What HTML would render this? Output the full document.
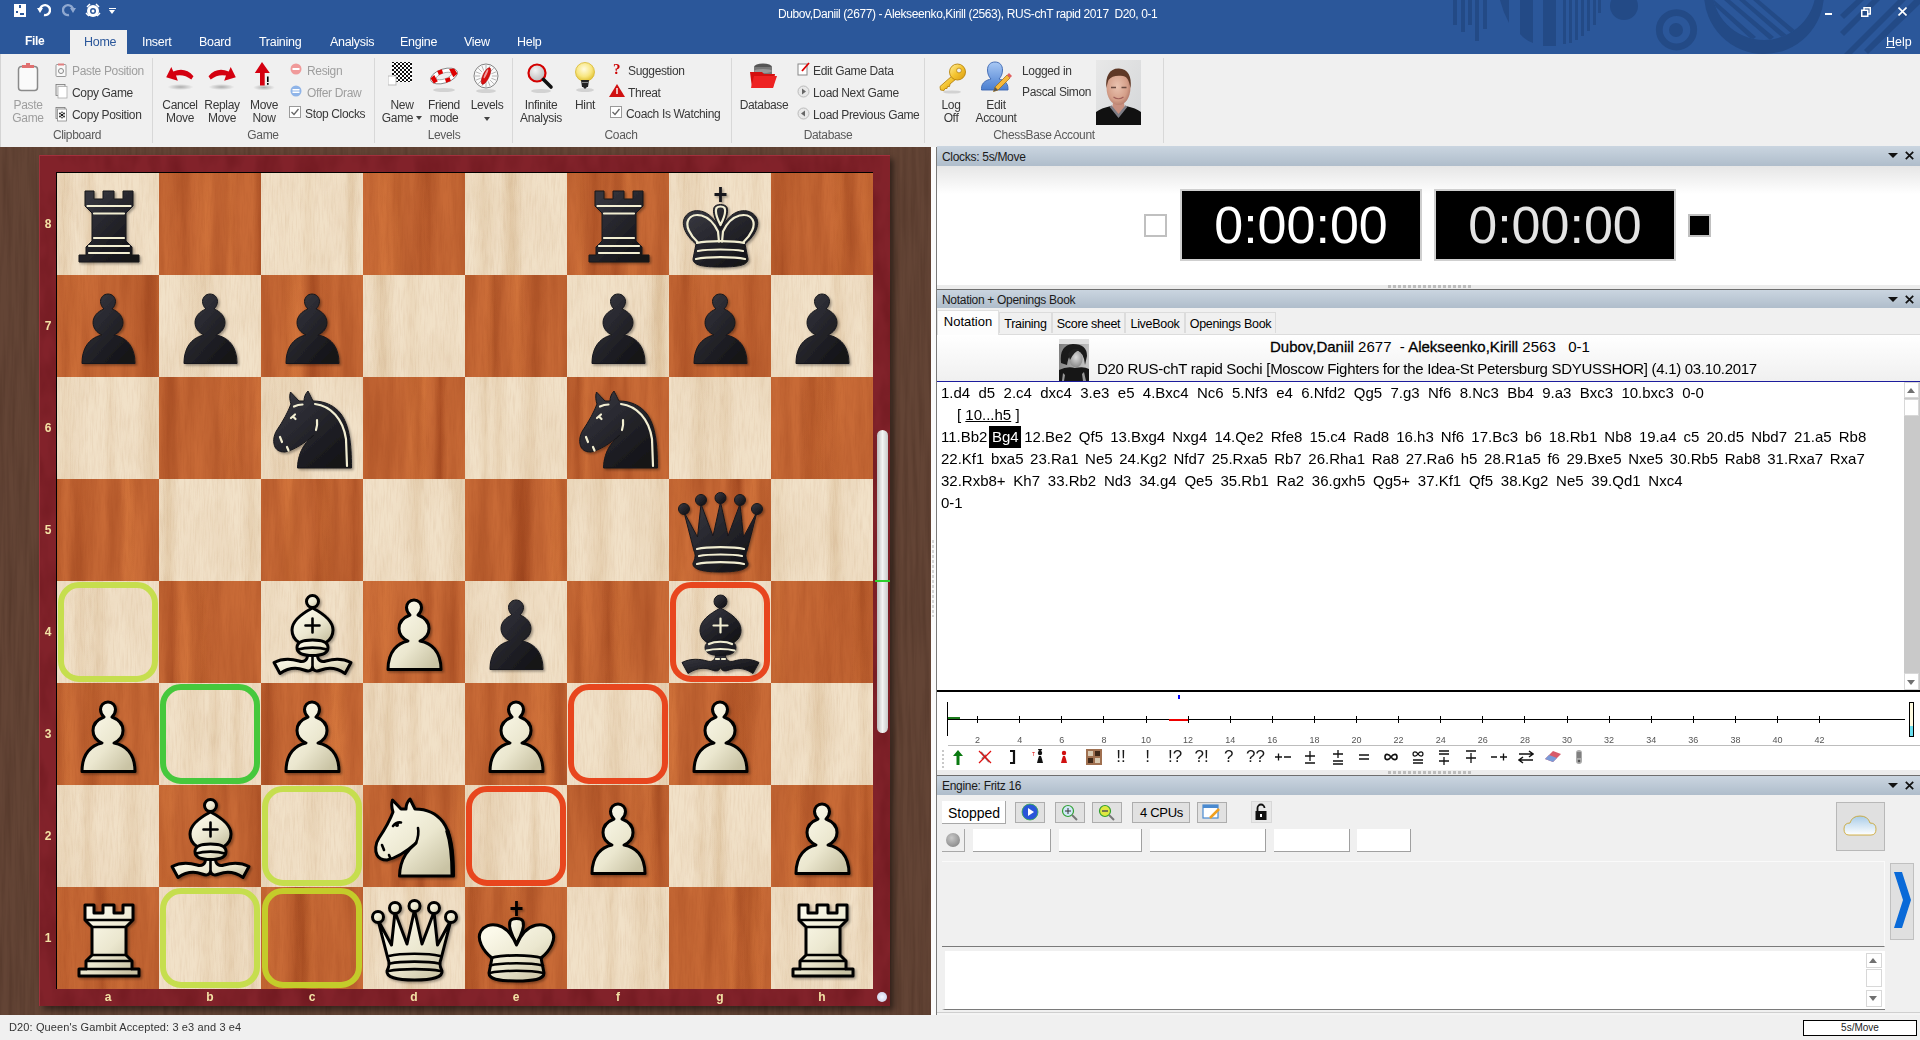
<!DOCTYPE html>
<html><head><meta charset="utf-8">
<style>
*{box-sizing:border-box}
html,body{margin:0;padding:0}
body{width:1920px;height:1040px;position:relative;overflow:hidden;background:#f0f0f0;font-family:"Liberation Sans",sans-serif;font-size:12px;color:#000}
.a{position:absolute}
#title{left:0;top:0;width:1920px;height:54px;background:#2b579a;overflow:hidden}
.tt{position:absolute;color:#fff;white-space:nowrap}
.tab{position:absolute;top:35px;color:#fff;font-size:12.5px;white-space:nowrap;letter-spacing:-0.3px}
#ribbon{left:0;top:54px;width:1920px;height:93px;background:#f0f0f0;border-left:1px solid #d4d4d4}
.rt{position:absolute;white-space:nowrap;font-size:12px;color:#383838;letter-spacing:-0.35px}
.rc{position:absolute;white-space:nowrap;font-size:12px;color:#383838;text-align:center;line-height:13px;letter-spacing:-0.35px}
.dis{color:#9e9e9e}
.grp{position:absolute;top:128px;font-size:12px;color:#5a5a5a;white-space:nowrap;text-align:center;letter-spacing:-0.35px}
.sep{position:absolute;top:58px;width:1px;height:85px;background:#d8d8d8}
#wood{left:0;top:147px;width:931px;height:868px;background-color:#634435}
#frame{left:39px;top:155px;width:851px;height:851px;background-color:#82222a;border-left:1px solid #a3303c;border-top:1px solid #a3303c;box-shadow:4px 4px 6px rgba(0,0,0,.45)}
.sq{position:absolute;width:102px;height:102px}
.l{background-color:#f1e1c8;--finel:repeating-linear-gradient(90deg,rgba(190,150,100,.04) 0 1px,transparent 1px 3px,rgba(255,255,255,.04) 3px 4px,transparent 4px 7px)}
.d{background-color:#c86a36;--fined:repeating-linear-gradient(90deg,rgba(120,40,10,.07) 0 1px,transparent 1px 4px,rgba(255,170,100,.05) 4px 5px,transparent 5px 9px)}
.hl{position:absolute;width:100px;height:100px;border:6px solid;border-radius:21px}
.pc{position:absolute;overflow:visible}
.rk{position:absolute;left:43px;width:10px;text-align:center;color:#f3e3a6;font-weight:bold;font-size:12px}
.fl{position:absolute;top:990px;width:20px;text-align:center;color:#f3e3a6;font-weight:bold;font-size:12px}
.ph{position:absolute;left:937px;width:983px;height:19px;background:linear-gradient(#cad5e0,#afbdcb);font-size:12px;color:#1a1a1a;padding:3px 0 0 5px;white-space:nowrap;letter-spacing:-0.3px}
.ph .dd{position:absolute;right:22px;top:7px;width:0;height:0;border-left:5px solid transparent;border-right:5px solid transparent;border-top:5px solid #111}
.ph .cx{position:absolute;right:6px;top:5px}
.ntab{position:absolute;top:312px;height:21px;background:#f0f0f0;border:1px solid #dcdcdc;border-bottom:none;font-size:12.5px;padding:4px 0 0 0;text-align:center;white-space:nowrap;letter-spacing:-0.3px}
.nt{position:absolute;font-size:15px;white-space:nowrap;color:#000}
.tk{position:absolute;top:716px;width:1px;height:7px;background:#000}
.tl{position:absolute;top:735px;font-size:9px;color:#555;width:20px;text-align:center}
.an{position:absolute;top:750px;font-size:16px;color:#222;white-space:nowrap;text-align:center;width:24px}
.ebtn{position:absolute;top:802px;height:21px;background:#e1e1e1;border:1px solid #adadad}
.efld{position:absolute;top:829px;height:23px;background:#fff;border-right:1px solid #a0a0a0;border-bottom:1px solid #a0a0a0}
</style></head><body>
<svg width="0" height="0" style="position:absolute"><defs>
<linearGradient id="wg" x1="0.2" y1="0.1" x2="0.9" y2="0.9"><stop offset="0" stop-color="#fbf9ea"/><stop offset="0.55" stop-color="#ebe7cf"/><stop offset="1" stop-color="#c9c3a4"/></linearGradient>
<linearGradient id="bg" x1="0.2" y1="0.1" x2="0.9" y2="0.9"><stop offset="0" stop-color="#34343c"/><stop offset="1" stop-color="#121216"/></linearGradient>
<filter id="sh" x="-10%" y="-10%" width="130%" height="130%"><feDropShadow dx="1.6" dy="1.6" stdDeviation="1" flood-color="#000" flood-opacity="0.35"/></filter>
<symbol id="wp" viewBox="0 0 102 102" overflow="visible"><g filter="url(#sh)"><path d="M51,19 C46.5,19 43.5,22.5 43.5,26.5 C43.5,29.5 45,32 47,34 C40.5,36.5 36,41.5 36,47.5 C36,53 39.5,57.5 45,60 C35,62 25,70 25,88.5 L78,88.5 C78,70 68,62 57,60 C62.5,57.5 66,53 66,47.5 C66,41.5 61.5,36.5 55,34 C57,32 58.5,29.5 58.5,26.5 C58.5,22.5 55.5,19 51,19 Z" fill="url(#wg)" stroke="#000" stroke-width="3" stroke-linejoin="round"/></g></symbol>
<symbol id="bp" viewBox="0 0 102 102" overflow="visible"><g filter="url(#sh)"><path d="M51,19 C46.5,19 43.5,22.5 43.5,26.5 C43.5,29.5 45,32 47,34 C40.5,36.5 36,41.5 36,47.5 C36,53 39.5,57.5 45,60 C35,62 25,70 25,88.5 L78,88.5 C78,70 68,62 57,60 C62.5,57.5 66,53 66,47.5 C66,41.5 61.5,36.5 55,34 C57,32 58.5,29.5 58.5,26.5 C58.5,22.5 55.5,19 51,19 Z" fill="url(#bg)" stroke="#18181c" stroke-width="1"/></g></symbol>
<symbol id="wr" viewBox="0 0 102 102" overflow="visible"><g filter="url(#sh)"><path d="M28,18 L37,18 L37,26 L46,26 L46,18 L57,18 L57,26 L66,26 L66,18 L76,18 L76,33 L69,40 L69,68 L75,74 L75,82 L82,82 L82,89 L22,89 L22,82 L29,82 L29,74 L35,68 L35,40 L28,33 Z" fill="url(#wg)" stroke="#000" stroke-width="3" stroke-linejoin="round"/><path d="M28,33 L76,33 M35,40 L69,40 M35,68 L69,68 M29,74 L75,74 M29,82 L75,82" fill="none" stroke="#000" stroke-width="2.6"/></g></symbol>
<symbol id="br" viewBox="0 0 102 102" overflow="visible"><g filter="url(#sh)"><path d="M28,18 L37,18 L37,26 L46,26 L46,18 L57,18 L57,26 L66,26 L66,18 L76,18 L76,33 L69,40 L69,68 L75,74 L75,82 L82,82 L82,89 L22,89 L22,82 L29,82 L29,74 L35,68 L35,40 L28,33 Z" fill="url(#bg)" stroke="#18181c" stroke-width="1"/><path d="M30.5,33 L73.5,33 M37,40.5 L67,40.5 M37,65 L67,65 M32,73 L72,73 M32,80 L72,80" fill="none" stroke="#f2eed2" stroke-width="2.2" stroke-linecap="round"/></g></symbol>
<symbol id="wn" viewBox="0 0 102 102" overflow="visible"><g filter="url(#sh)"><path d="M36.5,91 L90.5,91 C90.5,65 88,48 80,37 C73,28 63,24 52,24 L47,14 C44,17 43,21 43,24 L38,24 L29.5,15 C28,19 29,24 30,27 C27,35 22,44 16,53 C12,59 12,66 14,70 C16,74 20,75 24,75 C33,73 44,66 53,58 C47,63 37,72 36.5,91 Z" fill="url(#wg)" stroke="#000" stroke-width="3" stroke-linejoin="round"/><path d="M55,43 C56,48 55,53 53,58 M30,41 C32,38.5 35,37 38,37.5 M19,60 L21,65 M26,70 L27.5,73.5" fill="none" stroke="#000" stroke-width="2.6" stroke-linecap="round"/><circle cx="34" cy="40" r="2" fill="#000"/><path d="M84,45 C89,60 89.5,75 89.5,90" fill="none" stroke="#000" stroke-width="4"/></g></symbol>
<symbol id="bn" viewBox="0 0 102 102" overflow="visible"><g filter="url(#sh)"><path d="M36.5,91 L90.5,91 C90.5,65 88,48 80,37 C73,28 63,24 52,24 L47,14 C44,17 43,21 43,24 L38,24 L29.5,15 C28,19 29,24 30,27 C27,35 22,44 16,53 C12,59 12,66 14,70 C16,74 20,75 24,75 C33,73 44,66 53,58 C47,63 37,72 36.5,91 Z" fill="url(#bg)" stroke="#18181c" stroke-width="1"/><path d="M54,27 C70,29 82,42 85,62 L86,89 M56,43 C56.5,47 56,50 55,53 M33,29.5 C36,28 39,27.5 41.5,27.5 M30,41 L34,37.5 M32,39.5 L34.5,42 M19,60 L21,65 M26,70 L27.5,73.5" fill="none" stroke="#f2eed2" stroke-width="2.2" stroke-linecap="round"/></g></symbol>
<symbol id="wb" viewBox="0 0 102 102" overflow="visible"><g filter="url(#sh)"><path d="M13,81.5 C22,77 31,78 38,80 C43,81.5 46.5,79 46.5,74 L56.5,74 C56.5,79 60,81.5 65,80 C72,78 81,77 90,81.5 L84,92.5 C76,87 68,86 60,89 C55,91 52.5,89.5 51.5,86.5 C50.5,89.5 48,91 43,89 C35,86 27,87 19,92.5 Z" fill="url(#wg)" stroke="#000" stroke-width="3" stroke-linejoin="round"/><path d="M51.5,27 C40,33 31,40 31,49 C31,55 34,59 38,61.5 L65,61.5 C69,59 72,55 72,49 C72,40 63,33 51.5,27 Z" fill="url(#wg)" stroke="#000" stroke-width="3" stroke-linejoin="round"/><path d="M36,66.5 C36,60.5 44,59 51.5,59 C59,59 67,60.5 67,66.5 C67,72.5 60,74.5 51.5,74.5 C43,74.5 36,72.5 36,66.5 Z" fill="url(#wg)" stroke="#000" stroke-width="3" stroke-linejoin="round"/><circle cx="51.5" cy="20.5" r="6" fill="url(#wg)" stroke="#000" stroke-width="3" stroke-linejoin="round"/><path d="M37,68.5 C45,66 58,66 66,68.5 M44.5,44.5 L58.5,44.5 M51.5,37.5 L51.5,51.5 M51.5,75 L51.5,86" fill="none" stroke="#000" stroke-width="2.6" stroke-linecap="round"/></g></symbol>
<symbol id="bb" viewBox="0 0 102 102" overflow="visible"><g filter="url(#sh)"><path d="M13,81.5 C22,77 31,78 38,80 C43,81.5 46.5,79 46.5,74 L56.5,74 C56.5,79 60,81.5 65,80 C72,78 81,77 90,81.5 L84,92.5 C76,87 68,86 60,89 C55,91 52.5,89.5 51.5,86.5 C50.5,89.5 48,91 43,89 C35,86 27,87 19,92.5 Z" fill="url(#bg)" stroke="#18181c" stroke-width="1"/><path d="M51.5,27 C40,33 31,40 31,49 C31,55 34,59 38,61.5 L65,61.5 C69,59 72,55 72,49 C72,40 63,33 51.5,27 Z" fill="url(#bg)" stroke="#18181c" stroke-width="1"/><path d="M36,66.5 C36,60.5 44,59 51.5,59 C59,59 67,60.5 67,66.5 C67,72.5 60,74.5 51.5,74.5 C43,74.5 36,72.5 36,66.5 Z" fill="url(#bg)" stroke="#18181c" stroke-width="1"/><circle cx="51.5" cy="20.5" r="6.5" fill="url(#bg)" stroke="#18181c" stroke-width="1"/><path d="M40,63 C46,60 57,60 63,63 M37.5,69.5 C45,67.5 58,67.5 65.5,69.5 M44.5,44.5 L58.5,44.5 M51.5,37.5 L51.5,51.5 M47,78 L50,78 M53,78 L56,78" fill="none" stroke="#f2eed2" stroke-width="2.2" stroke-linecap="round"/></g></symbol>
<symbol id="wq" viewBox="0 0 102 102" overflow="visible"><g filter="url(#sh)"><path d="M15,33 L28.5,58 L32,25 L44,57 L51.5,23 L59,57 L71,25 L74.5,58 L88,33 L78,72 C76,76 77,80 79,84 C80,90 70,93 51.5,93 C33,93 23,90 24,84 C26,80 27,76 25,72 Z" fill="url(#wg)" stroke="#000" stroke-width="3" stroke-linejoin="round"/><circle cx="15" cy="30" r="5.5" fill="url(#wg)" stroke="#000" stroke-width="3" stroke-linejoin="round"/><circle cx="32" cy="21" r="5.5" fill="url(#wg)" stroke="#000" stroke-width="3" stroke-linejoin="round"/><circle cx="51.5" cy="19" r="5.5" fill="url(#wg)" stroke="#000" stroke-width="3" stroke-linejoin="round"/><circle cx="71" cy="21" r="5.5" fill="url(#wg)" stroke="#000" stroke-width="3" stroke-linejoin="round"/><circle cx="88" cy="30" r="5.5" fill="url(#wg)" stroke="#000" stroke-width="3" stroke-linejoin="round"/><path d="M26,69 C38,66 65,66 77,69 M27,76.5 C38,74 65,74 76,76.5 M25.5,84 C38,81.5 65,81.5 77.5,84" fill="none" stroke="#000" stroke-width="2.6" stroke-linecap="round"/></g></symbol>
<symbol id="bq" viewBox="0 0 102 102" overflow="visible"><g filter="url(#sh)"><path d="M15,33 L28.5,58 L32,25 L44,57 L51.5,23 L59,57 L71,25 L74.5,58 L88,33 L78,72 C76,76 77,80 79,84 C80,90 70,93 51.5,93 C33,93 23,90 24,84 C26,80 27,76 25,72 Z" fill="url(#bg)" stroke="#18181c" stroke-width="1"/><circle cx="15" cy="30" r="5.5" fill="url(#bg)" stroke="#18181c" stroke-width="1"/><circle cx="32" cy="21" r="5.5" fill="url(#bg)" stroke="#18181c" stroke-width="1"/><circle cx="51.5" cy="19" r="5.5" fill="url(#bg)" stroke="#18181c" stroke-width="1"/><circle cx="71" cy="21" r="5.5" fill="url(#bg)" stroke="#18181c" stroke-width="1"/><circle cx="88" cy="30" r="5.5" fill="url(#bg)" stroke="#18181c" stroke-width="1"/><path d="M28,70 C38,67.5 65,67.5 75,70 M30,77 C40,75 63,75 73,77 M28,85 C38,82.5 65,82.5 75,85" fill="none" stroke="#f2eed2" stroke-width="2.2" stroke-linecap="round"/></g></symbol>
<symbol id="wk" viewBox="0 0 102 102" overflow="visible"><g filter="url(#sh)"><path d="M51.5,14 L51.5,29 M45.5,21.5 L57.5,21.5" fill="none" stroke="#000" stroke-width="2.8"/><path d="M51.5,57 C45,45 43.5,39 45,34.5 C46.5,30.5 56.5,30.5 58,34.5 C59.5,39 58,45 51.5,57 Z" fill="url(#wg)" stroke="#000" stroke-width="3" stroke-linejoin="round"/><path d="M27,71 C18,64 11,52 16,44 C22,34 42,34 51.5,58 C61,34 81,34 87,44 C92,52 85,64 76,71 L79,86 C79,92 70,94 51.5,94 C33,94 24,92 24,86 Z" fill="url(#wg)" stroke="#000" stroke-width="3" stroke-linejoin="round"/><path d="M26,71 C38,67.5 65,67.5 77,71 M25,78.5 C38,75.5 65,75.5 78,78.5 M24.5,86 C38,83 65,83 78.5,86" fill="none" stroke="#000" stroke-width="2.6" stroke-linecap="round"/></g></symbol>
<symbol id="bk" viewBox="0 0 102 102" overflow="visible"><g filter="url(#sh)"><path d="M51.5,14 L51.5,29 M45.5,21.5 L57.5,21.5" fill="none" stroke="#18181c" stroke-width="2.8"/><path d="M51.5,57 C45,45 43.5,39 45,34.5 C46.5,30.5 56.5,30.5 58,34.5 C59.5,39 58,45 51.5,57 Z" fill="url(#bg)" stroke="#18181c" stroke-width="1"/><path d="M27,71 C18,64 11,52 16,44 C22,34 42,34 51.5,58 C61,34 81,34 87,44 C92,52 85,64 76,71 L79,86 C79,92 70,94 51.5,94 C33,94 24,92 24,86 Z" fill="url(#bg)" stroke="#18181c" stroke-width="1"/><path d="M51.5,52 C47,43 46,38 47.5,35 C49,33 54,33 55.5,35 C57,38 56,43 51.5,52 M28.5,69 C21,62 16,53 19.5,46.5 C24,39 40,39.5 49,58.5 L50,69 M74.5,69 C82,62 87,53 83.5,46.5 C79,39 63,39.5 54,58.5 L53,69 M28,70 C38,67.5 65,67.5 75,70 M29,78 C40,76 63,76 74,78 M27,86 C38,83.5 65,83.5 76,86" fill="none" stroke="#f2eed2" stroke-width="2.2" stroke-linecap="round"/></g></symbol>
</defs></svg>

<!-- TITLE BAR -->
<div id="title" class="a">
  <svg class="a" style="left:1440px;top:0" width="480" height="54" viewBox="0 0 480 54">
    <g fill="#234a86">
      <rect x="13" y="0" width="4" height="25"/><rect x="21" y="0" width="4" height="32"/><rect x="28" y="0" width="4" height="25"/><rect x="35" y="0" width="4" height="41"/><rect x="43" y="0" width="4" height="29"/>
      <path d="M60,0 L69,0 L69,23 Q63,12 60,0 z"/>
      <path d="M80,0 L93,0 L93,43 Q85,40 80,34 z"/>
      <rect x="103" y="0" width="13" height="46"/>
      <rect x="123" y="0" width="3" height="44"/><rect x="129" y="0" width="3" height="43"/><rect x="135" y="0" width="3" height="40"/><rect x="141" y="0" width="3" height="36"/><rect x="147" y="0" width="3" height="31"/><rect x="153" y="0" width="3" height="25"/><rect x="158" y="0" width="3" height="13"/>
      <circle cx="184" cy="6" r="14"/>
      <circle cx="236.5" cy="29.8" r="17.2" fill="none" stroke="#234a86" stroke-width="6.8"/><circle cx="236" cy="30" r="7"/>
      <path fill-rule="evenodd" d="M264,-6 A60,60 0 1 0 384,-6 A60,60 0 1 0 264,-6 Z M272,-12 A52,52 0 1 1 376,-12 A52,52 0 1 1 272,-12 Z"/>
      <clipPath id="ringclip"><circle cx="324" cy="-12" r="52"/></clipPath><g clip-path="url(#ringclip)"><path d="M268,0 L312,40 L316,37 L274,0 z"/><path d="M284,0 L330,40 L334,37 L290,0 z"/><path d="M299,0 L345,40 L349,37 L305,0 z"/><path d="M313,0 L359,40 L363,37 L319,0 z"/></g>
      <path d="M400,15 L416,0 L424,0 L404,19 z"/><path d="M400,32 L432,0 L440,0 L404,36 z"/><path d="M404,54 L458,0 L466,0 L412,54 z"/><path d="M424,50 L474,0 L480,0 L480,4 L428,54 z"/>
    </g>
  </svg>
  <!-- QAT icons -->
  <div class="a" style="left:14px;top:4px;width:12px;height:13px;background:#fff"></div>
  <div class="a" style="left:19px;top:5px;width:2px;height:3px;background:#2b579a"></div>
  <div class="a" style="left:16px;top:11px;width:2px;height:2px;background:#2b579a"></div>
  <div class="a" style="left:20px;top:13px;width:4px;height:2px;background:#2b579a"></div>
  <svg class="a" style="left:37px;top:3px" width="14" height="14" viewBox="0 0 14 14"><path d="M3,7 A5,5 0 1 1 7,12" fill="none" stroke="#fff" stroke-width="2.4"/><path d="M0,5 L6,5 L3,10 z" fill="#fff"/></svg>
  <svg class="a" style="left:62px;top:3px" width="14" height="14" viewBox="0 0 14 14"><path d="M11,7 A5,5 0 1 0 7,12" fill="none" stroke="#8fa8d0" stroke-width="2.4"/><path d="M14,5 L8,5 L11,10 z" fill="#8fa8d0"/></svg>
  <svg class="a" style="left:85px;top:3px" width="16" height="16" viewBox="0 0 16 16"><circle cx="8" cy="8" r="6" fill="#fff"/><circle cx="8" cy="8" r="3" fill="#2b579a"/><circle cx="8" cy="8" r="1.5" fill="#fff"/><path d="M2,4 L5,1 M11,1 L14,4 M1,10 L4,13 M12,13 L15,10" stroke="#fff" stroke-width="1.5"/></svg>
  <div class="a" style="left:109px;top:8px;width:7px;height:1px;background:#fff"></div>
  <div class="a" style="left:109px;top:10px;width:0;height:0;border-left:3.5px solid transparent;border-right:3.5px solid transparent;border-top:4px solid #fff"></div>
  <div class="tt" style="left:778px;top:7px;font-size:12px;letter-spacing:-0.4px">Dubov,Daniil (2677) - Alekseenko,Kirill (2563), RUS-chT rapid 2017&nbsp; D20, 0-1</div>
  <!-- window controls -->
  <div class="a" style="left:1825px;top:13px;width:7px;height:2px;background:#fff"></div>
  <svg class="a" style="left:1861px;top:7px" width="10" height="10" viewBox="0 0 10 10"><rect x="0.75" y="3.25" width="6" height="6" fill="none" stroke="#fff" stroke-width="1.5"/><path d="M3,3 L3,0.75 L9.25,0.75 L9.25,7 L7,7" fill="none" stroke="#fff" stroke-width="1.5"/></svg>
  <svg class="a" style="left:1898px;top:7px" width="9" height="9" viewBox="0 0 9 9"><path d="M0.5,0.5 L8.5,8.5 M8.5,0.5 L0.5,8.5" stroke="#fff" stroke-width="1.6"/></svg>
  <div class="tt" style="left:1886px;top:35px;font-size:12.5px"><u>H</u>elp</div>
  <!-- tabs -->
  <div class="a" style="left:70px;top:30px;width:57px;height:24px;background:#f0f0f0"></div>
  <div class="tab" style="left:25px;font-weight:bold;font-size:12px;top:34px">File</div>
  <div class="tab" style="left:84px;color:#2b579a">Home</div>
  <div class="tab" style="left:142px">Insert</div>
  <div class="tab" style="left:199px">Board</div>
  <div class="tab" style="left:259px">Training</div>
  <div class="tab" style="left:330px">Analysis</div>
  <div class="tab" style="left:400px">Engine</div>
  <div class="tab" style="left:464px">View</div>
  <div class="tab" style="left:517px">Help</div>
</div>

<!-- RIBBON -->
<div id="ribbon" class="a"></div>
<div class="sep" style="left:152px"></div>
<div class="sep" style="left:374px"></div>
<div class="sep" style="left:512px"></div>
<div class="sep" style="left:731px"></div>
<div class="sep" style="left:924px"></div>
<div class="sep" style="left:1163px"></div>
<!-- clipboard -->
<svg class="a" style="left:17px;top:63px" width="22" height="29" viewBox="0 0 22 29"><rect x="1.5" y="3.5" width="19" height="24" rx="3" fill="#fafafa" stroke="#8a8a8a" stroke-width="1.5"/><rect x="5" y="2" width="12" height="3" fill="#e07070"/><rect x="9" y="0" width="4" height="3" fill="#e07070"/></svg>
<div class="rc dis" style="left:8px;top:99px;width:40px">Paste<br>Game</div>
<svg class="a" style="left:55px;top:63px" width="12" height="14" viewBox="0 0 12 14"><rect x="1" y="1.5" width="10" height="12" rx="1" fill="#f8f8f8" stroke="#999"/><rect x="3" y="0.5" width="6" height="2" fill="#e08080"/><circle cx="6" cy="8" r="2.5" fill="none" stroke="#888"/></svg>
<div class="rt dis" style="left:72px;top:64px">Paste Position</div>
<svg class="a" style="left:55px;top:84px" width="14" height="15" viewBox="0 0 14 15"><rect x="1" y="0.5" width="9" height="11" fill="#e8e8e8" stroke="#777" stroke-width="0.8"/><rect x="3" y="2.5" width="9" height="11.5" fill="#fff" stroke="#aaa" stroke-width="0.8"/></svg>
<div class="rt" style="left:72px;top:86px">Copy Game</div>
<svg class="a" style="left:55px;top:107px" width="14" height="15" viewBox="0 0 14 15"><rect x="1" y="0.5" width="9" height="11" fill="#e8e8e8" stroke="#777" stroke-width="0.8"/><rect x="2.5" y="2" width="9" height="12" fill="#fff" stroke="#888" stroke-width="0.8"/><g fill="#111"><circle cx="7" cy="8" r="1.2"/><circle cx="5" cy="6.5" r="0.9"/><circle cx="9" cy="6.5" r="0.9"/><circle cx="5" cy="9.5" r="0.9"/><circle cx="9" cy="9.5" r="0.9"/><circle cx="7" cy="5.3" r="0.8"/><circle cx="7" cy="10.8" r="0.8"/></g></svg>
<div class="rt" style="left:72px;top:108px">Copy Position</div>
<div class="grp" style="left:52px;width:50px">Clipboard</div>
<!-- game -->
<svg class="a" style="left:165px;top:64px" width="30" height="28" viewBox="0 0 30 28"><defs><radialGradient id="shd" cx="0.5" cy="0.5" r="0.5"><stop offset="0" stop-color="#000" stop-opacity="0.28"/><stop offset="1" stop-color="#000" stop-opacity="0"/></radialGradient></defs><ellipse cx="15.5" cy="23" rx="13" ry="3" fill="url(#shd)"/><path d="M1.2,13.2 L6.3,3 L8.3,7.6 Q20,2.5 28.5,12.2 L26.3,15.6 Q19,9.8 11,11.6 L12.8,16.7 Z" fill="#d40010"/></svg>
<div class="rc" style="left:158px;top:99px;width:44px">Cancel<br>Move</div>
<svg class="a" style="left:207px;top:64px" width="30" height="28" viewBox="0 0 30 28"><ellipse cx="14.5" cy="23" rx="13" ry="3" fill="url(#shd)"/><path d="M28.8,13.2 L23.7,3 L21.7,7.6 Q10,2.5 1.5,12.2 L3.7,15.6 Q11,9.8 19,11.6 L17.2,16.7 Z" fill="#d40010"/></svg>
<div class="rc" style="left:200px;top:99px;width:44px">Replay<br>Move</div>
<svg class="a" style="left:252px;top:60px" width="24" height="32" viewBox="0 0 24 32"><ellipse cx="12" cy="27.5" rx="11" ry="3" fill="url(#shd)"/><path d="M10,2 L17.8,13 L12.7,13 L12.7,25.5 L8,25.5 L8,13 L2.8,13 Z" fill="#d40010"/><rect x="15" y="16.5" width="1.6" height="5.5" fill="#000"/><rect x="15" y="23" width="1.6" height="1.8" fill="#000"/></svg>
<div class="rc" style="left:242px;top:99px;width:44px">Move<br>Now</div>
<svg class="a" style="left:290px;top:63px" width="12" height="12" viewBox="0 0 12 12"><circle cx="6" cy="6" r="5.5" fill="#f09a9a"/><rect x="2.5" y="5" width="7" height="2" fill="#fff"/></svg>
<div class="rt dis" style="left:307px;top:64px">Resign</div>
<svg class="a" style="left:290px;top:85px" width="12" height="12" viewBox="0 0 12 12"><circle cx="6" cy="6" r="5.5" fill="#8fb4e8"/><rect x="2.5" y="4" width="7" height="1.5" fill="#fff"/><rect x="2.5" y="6.5" width="7" height="1.5" fill="#fff"/></svg>
<div class="rt dis" style="left:307px;top:86px">Offer Draw</div>
<svg class="a" style="left:289px;top:106px" width="12" height="12" viewBox="0 0 12 12"><rect x="0.5" y="0.5" width="11" height="11" fill="#fff" stroke="#9a9a9a"/><path d="M2.5,6 L5,8.5 L9.5,3" fill="none" stroke="#666" stroke-width="1.3"/></svg>
<div class="rt" style="left:305px;top:107px">Stop Clocks</div>
<div class="grp" style="left:243px;width:40px">Game</div>
<!-- levels -->
<svg class="a" style="left:388px;top:61px" width="28" height="26" viewBox="0 0 28 26"><defs><pattern id="chk" width="4" height="4" patternUnits="userSpaceOnUse"><rect width="4" height="4" fill="#fff"/><rect width="2" height="2" fill="#111"/><rect x="2" y="2" width="2" height="2" fill="#111"/></pattern></defs><rect x="4" y="1" width="20" height="20" fill="url(#chk)"/><rect x="0" y="15" width="8" height="9" fill="#fff" stroke="#bbb"/></svg>
<div class="rc" style="left:380px;top:99px;width:44px">New<br>Game&nbsp;<span style="display:inline-block;width:0;height:0;border-left:3.5px solid transparent;border-right:3.5px solid transparent;border-top:4px solid #444;vertical-align:middle;margin-bottom:2px"></span></div>
<svg class="a" style="left:427px;top:63px" width="34" height="30" viewBox="0 0 34 30"><ellipse cx="17" cy="27" rx="11" ry="2" fill="#000" opacity="0.12"/><g transform="rotate(-18 17 13)"><ellipse cx="17" cy="13" rx="14" ry="7" fill="#fff" stroke="#777" stroke-width="0.8"/><ellipse cx="17" cy="13" rx="8" ry="3" fill="#f0f0f0" stroke="#888" stroke-width="0.6"/><path d="M3.5,11 L8,9 L9.5,16 L5,17 z M24,8 L29,9 L30.5,15 L25.5,17 z" fill="#d00"/><path d="M12,6.2 L17,6 L17,10 L12.5,10.4 z M17,16 L22,16 L22,19.8 L17,20 z" fill="#d00"/></g></svg>
<div class="rc" style="left:422px;top:99px;width:44px">Friend<br>mode</div>
<svg class="a" style="left:471px;top:62px" width="30" height="32" viewBox="0 0 30 32"><ellipse cx="15" cy="29" rx="10" ry="2" fill="#000" opacity="0.12"/><circle cx="15" cy="14" r="12" fill="#fafafa" stroke="#666" stroke-width="0.8"/><g stroke="#888" stroke-width="0.6"><path d="M15,3 L15,25 M4,14 L26,14 M7.2,6.2 L22.8,21.8 M22.8,6.2 L7.2,21.8 M10.8,3.8 L19.2,24.2 M19.2,3.8 L10.8,24.2 M4.8,9.8 L25.2,18.2 M4.8,18.2 L25.2,9.8"/></g><circle cx="15" cy="14" r="6" fill="#fafafa"/><ellipse cx="15" cy="14" rx="3.2" ry="9" transform="rotate(25 15 14)" fill="#d81010" stroke="#900" stroke-width="0.5"/><ellipse cx="14" cy="12" rx="1" ry="5" transform="rotate(25 15 14)" fill="#fff" opacity="0.6"/></svg>
<div class="rc" style="left:465px;top:99px;width:44px">Levels<br><span style="display:inline-block;width:0;height:0;border-left:3.5px solid transparent;border-right:3.5px solid transparent;border-top:4px solid #444;vertical-align:middle"></span></div>
<div class="grp" style="left:424px;width:40px">Levels</div>
<!-- coach -->
<svg class="a" style="left:525px;top:62px" width="32" height="32" viewBox="0 0 32 32"><defs><radialGradient id="lens" cx="0.4" cy="0.35" r="0.7"><stop offset="0" stop-color="#f4f4f4"/><stop offset="1" stop-color="#b8b8b8"/></radialGradient></defs><ellipse cx="16" cy="29" rx="10" ry="2" fill="#000" opacity="0.12"/><circle cx="12" cy="11" r="8.5" fill="url(#lens)" stroke="#d40000" stroke-width="2.2"/><path d="M18.5,17.5 L26,25" stroke="#111" stroke-width="3.6" stroke-linecap="round"/></svg>
<div class="rc" style="left:516px;top:99px;width:50px">Infinite<br>Analysis</div>
<svg class="a" style="left:572px;top:61px" width="26" height="32" viewBox="0 0 26 32"><defs><radialGradient id="bulb" cx="0.45" cy="0.35" r="0.65"><stop offset="0" stop-color="#fffbe0"/><stop offset="0.6" stop-color="#f8e680"/><stop offset="1" stop-color="#e0c030"/></radialGradient></defs><ellipse cx="13" cy="29" rx="9" ry="2" fill="#000" opacity="0.12"/><circle cx="13" cy="11" r="9.5" fill="url(#bulb)" stroke="#d8b830" stroke-width="0.8"/><path d="M9,19 L17,19 L16,26 L10,26 z" fill="#222"/><rect x="10" y="21" width="6" height="1" fill="#888"/><path d="M11,26 L15,26 L13,28 z" fill="#222"/></svg>
<div class="rc" style="left:566px;top:99px;width:38px">Hint</div>
<div class="a" style="left:613px;top:61px;color:#c00;font-weight:bold;font-size:15px;font-family:'Liberation Serif',serif">?</div>
<div class="rt" style="left:628px;top:64px">Suggestion</div>
<svg class="a" style="left:609px;top:84px" width="16" height="14" viewBox="0 0 16 14"><path d="M8,0 L16,13 L0,13 z" fill="#d01010"/><rect x="7.3" y="4" width="1.4" height="6" fill="#fff"/></svg>
<div class="rt" style="left:628px;top:86px">Threat</div>
<svg class="a" style="left:610px;top:106px" width="12" height="12" viewBox="0 0 12 12"><rect x="0.5" y="0.5" width="11" height="11" fill="#fff" stroke="#9a9a9a"/><path d="M2.5,6 L5,8.5 L9.5,3" fill="none" stroke="#666" stroke-width="1.3"/></svg>
<div class="rt" style="left:626px;top:107px">Coach Is Watching</div>
<div class="grp" style="left:601px;width:40px">Coach</div>
<!-- database -->
<svg class="a" style="left:748px;top:62px" width="30" height="28" viewBox="0 0 30 28"><ellipse cx="15" cy="5" rx="9" ry="3.5" fill="#555"/><rect x="6" y="5" width="18" height="9" fill="#777"/><ellipse cx="15" cy="9" rx="9" ry="2" fill="#999"/><path d="M2,10 L14,10 L16,12 L27,12 L25,26 L4,26 z" fill="#d41010"/><path d="M6,14 L29,14 L25,26 L3,26 z" fill="#ee2222"/></svg>
<div class="rc" style="left:737px;top:99px;width:54px">Database</div>
<svg class="a" style="left:797px;top:62px" width="13" height="14" viewBox="0 0 13 14"><rect x="1" y="2" width="9" height="11" fill="#fff" stroke="#888"/><path d="M5,9 L12,1" stroke="#d00" stroke-width="1.8"/></svg>
<div class="rt" style="left:813px;top:64px">Edit Game Data</div>
<svg class="a" style="left:797px;top:85px" width="13" height="13" viewBox="0 0 13 13"><circle cx="6.5" cy="6.5" r="5.5" fill="#e8e8e8" stroke="#bbb"/><path d="M5,3.5 L9,6.5 L5,9.5 z" fill="#666"/></svg>
<div class="rt" style="left:813px;top:86px">Load Next Game</div>
<svg class="a" style="left:797px;top:107px" width="13" height="13" viewBox="0 0 13 13"><circle cx="6.5" cy="6.5" r="5.5" fill="#e8e8e8" stroke="#bbb"/><path d="M8,3.5 L4,6.5 L8,9.5 z" fill="#666"/></svg>
<div class="rt" style="left:813px;top:108px">Load Previous Game</div>
<div class="grp" style="left:798px;width:60px">Database</div>
<!-- account -->
<svg class="a" style="left:936px;top:62px" width="32" height="32" viewBox="0 0 32 32"><defs><linearGradient id="gold" x1="0" y1="0" x2="1" y2="1"><stop offset="0" stop-color="#fff0a0"/><stop offset="0.5" stop-color="#f4c430"/><stop offset="1" stop-color="#d89a10"/></linearGradient></defs><ellipse cx="16" cy="30" rx="9" ry="1.6" fill="#000" opacity="0.12"/><path d="M16.5,13.5 L4,24.5 L4.5,28 L8,28.5 L9,26.5 L11,26.5 L11.5,24.5 L13.5,24.5 L14,22 L20,17 z" fill="url(#gold)" stroke="#b88410" stroke-width="0.9" stroke-linejoin="round"/><circle cx="21.5" cy="10" r="8" fill="url(#gold)" stroke="#b88410" stroke-width="0.9"/><circle cx="23" cy="8.5" r="2.4" fill="#f0f0f0" stroke="#b88410" stroke-width="0.8"/></svg>
<div class="rc" style="left:931px;top:99px;width:40px">Log<br>Off</div>
<svg class="a" style="left:979px;top:60px" width="34" height="34" viewBox="0 0 34 34"><defs><linearGradient id="blu" x1="0" y1="0" x2="0" y2="1"><stop offset="0" stop-color="#a8c8f4"/><stop offset="1" stop-color="#4a7ed0"/></linearGradient></defs><path d="M16,2 C11,2 8.5,5.5 8.5,10 C8.5,14 10,17 12,19 C8,20 2.5,22 2.5,28.5 L2.5,30 L29,30 L29,28.5 C29,22 24,20 20,19 C22,17 23.5,14 23.5,10 C23.5,5.5 21,2 16,2 Z" fill="url(#blu)" stroke="#3a64b0" stroke-width="0.9"/><path d="M14.5,31.5 L16,27 L28,15 L31,18 L19,30 z" fill="#f6b83a" stroke="#9a6a10" stroke-width="0.7"/><path d="M28,15 L30,13 L33,16 L31,18 z" fill="#e06060"/><path d="M14.5,31.5 L16,27 L19,30 z" fill="#555"/></svg>
<div class="rc" style="left:970px;top:99px;width:52px">Edit<br>Account</div>
<div class="rt" style="left:1022px;top:64px">Logged in</div>
<div class="rt" style="left:1022px;top:85px">Pascal Simon</div>
<svg class="a" style="left:1096px;top:60px" width="45" height="65" viewBox="0 0 45 65"><defs><radialGradient id="face" cx="0.45" cy="0.45" r="0.6"><stop offset="0" stop-color="#eac3b0"/><stop offset="0.7" stop-color="#d49e88"/><stop offset="1" stop-color="#b07868"/></radialGradient><linearGradient id="pbg" x1="0" y1="0" x2="1" y2="1"><stop offset="0" stop-color="#e8e8e8"/><stop offset="1" stop-color="#d4d6d8"/></linearGradient></defs><rect width="45" height="65" fill="url(#pbg)"/><path d="M17,43 L28,43 L30,54 L15,54 z" fill="#c89080"/><path d="M10.5,27 C10.5,14 16,11 22.5,11 C29,11 34.5,14 34.5,27 C34.5,38 29,45 22.5,45 C16,45 10.5,38 10.5,27 Z" fill="url(#face)"/><path d="M10.5,28 C9,16 14,8 23,8.5 C32,9 36,16 34.5,28 C33,21 32,17 27,16 C21,15 15,16 12.5,20 C11.5,23 11,25 10.5,28 z" fill="#5e3826"/><path d="M15,27.5 L20,27.5 M25.5,27.5 L30.5,27.5" stroke="#6a4a40" stroke-width="1.4"/><path d="M17.5,37 Q22.5,40.5 27.5,37" stroke="#a0605a" stroke-width="1.2" fill="none"/><path d="M0,65 L0,52 Q5,48 15,46 L22.5,55 L30,46 Q40,48 45,52 L45,65 z" fill="#111"/><path d="M14.5,46 L22.5,56 L30.5,46" fill="none" stroke="#7e7e86" stroke-width="2.6"/></svg>
<div class="grp" style="left:984px;width:120px">ChessBase Account</div>

<!-- BOARD AREA -->
<div id="wood" class="a"></div>
<svg class="a" style="left:0;top:147px;mix-blend-mode:multiply" width="931" height="868"><filter id="wgr" x="0" y="0" width="100%" height="100%"><feTurbulence type="fractalNoise" baseFrequency="0.25 0.01" numOctaves="3" seed="11"/><feColorMatrix type="matrix" values="0 0 0 0 0.3  0 0 0 0 0.2  0 0 0 0 0.15  -1.5 0 0 0 1.0"/></filter><rect width="931" height="868" filter="url(#wgr)" opacity="0.35"/></svg>
<div id="frame" class="a"></div>
<svg class="a" style="left:40px;top:156px;mix-blend-mode:multiply" width="850" height="850"><filter id="fgr" x="0" y="0" width="100%" height="100%"><feTurbulence type="fractalNoise" baseFrequency="0.05 0.02" numOctaves="3" seed="5"/><feColorMatrix type="matrix" values="0 0 0 0 0.35  0 0 0 0 0.05  0 0 0 0 0.08  -1.5 0 0 0 1.0"/></filter><rect width="850" height="850" filter="url(#fgr)" opacity="0.4"/></svg>
<div class="a" style="left:56px;top:172px;width:817px;height:1px;background:#000"></div><div class="a" style="left:56px;top:172px;width:1px;height:817px;background:#000"></div>
<div class="sq l" style="left:57px;top:173px;background-image:linear-gradient(90deg,transparent 25%,rgba(200,160,110,0.18) 32%,transparent 40%),linear-gradient(90deg,transparent -4%,rgba(200,160,110,0.14) 7%,transparent 19%),linear-gradient(90deg,transparent -5%,rgba(200,160,110,0.10) 6%,transparent 17%)"></div>
<div class="sq d" style="left:159px;top:173px;background-image:linear-gradient(90deg,transparent 7%,rgba(140,50,15,0.20) 23%,transparent 38%),linear-gradient(90deg,transparent 64%,rgba(235,140,70,0.18) 70%,transparent 77%),linear-gradient(90deg,transparent 92%,rgba(140,50,15,0.27) 100%,transparent 108%),linear-gradient(90deg,transparent 35%,rgba(235,140,70,0.21) 46%,transparent 56%)"></div>
<div class="sq l" style="left:261px;top:173px;background-image:linear-gradient(90deg,transparent 37%,rgba(200,160,110,0.12) 46%,transparent 56%),linear-gradient(90deg,transparent 81%,rgba(200,160,110,0.16) 87%,transparent 93%),linear-gradient(90deg,transparent 83%,rgba(200,160,110,0.17) 90%,transparent 97%)"></div>
<div class="sq d" style="left:363px;top:173px;background-image:linear-gradient(90deg,transparent 47%,rgba(140,50,15,0.26) 57%,transparent 67%),linear-gradient(90deg,transparent 6%,rgba(235,140,70,0.26) 21%,transparent 35%),linear-gradient(90deg,transparent 58%,rgba(140,50,15,0.25) 65%,transparent 73%),linear-gradient(90deg,transparent 24%,rgba(235,140,70,0.27) 33%,transparent 41%)"></div>
<div class="sq l" style="left:465px;top:173px;background-image:linear-gradient(90deg,transparent 34%,rgba(200,160,110,0.21) 45%,transparent 57%),linear-gradient(90deg,transparent 35%,rgba(200,160,110,0.17) 47%,transparent 58%),linear-gradient(90deg,transparent 7%,rgba(200,160,110,0.18) 18%,transparent 30%)"></div>
<div class="sq d" style="left:567px;top:173px;background-image:linear-gradient(90deg,transparent 35%,rgba(140,50,15,0.27) 47%,transparent 60%),linear-gradient(90deg,transparent 8%,rgba(235,140,70,0.20) 14%,transparent 20%),linear-gradient(90deg,transparent 13%,rgba(140,50,15,0.28) 27%,transparent 42%),linear-gradient(90deg,transparent 49%,rgba(235,140,70,0.24) 60%,transparent 72%)"></div>
<div class="sq l" style="left:669px;top:173px;background-image:linear-gradient(90deg,transparent 13%,rgba(200,160,110,0.18) 26%,transparent 39%),linear-gradient(90deg,transparent 77%,rgba(200,160,110,0.13) 85%,transparent 93%),linear-gradient(90deg,transparent 6%,rgba(200,160,110,0.19) 15%,transparent 23%)"></div>
<div class="sq d" style="left:771px;top:173px;background-image:linear-gradient(90deg,transparent -2%,rgba(140,50,15,0.27) 11%,transparent 24%),linear-gradient(90deg,transparent 85%,rgba(235,140,70,0.18) 94%,transparent 103%),linear-gradient(90deg,transparent 61%,rgba(140,50,15,0.22) 73%,transparent 86%),linear-gradient(90deg,transparent 58%,rgba(235,140,70,0.25) 68%,transparent 78%)"></div>
<div class="sq d" style="left:57px;top:275px;background-image:linear-gradient(90deg,transparent 90%,rgba(140,50,15,0.28) 97%,transparent 103%),linear-gradient(90deg,transparent -0%,rgba(235,140,70,0.15) 16%,transparent 32%),linear-gradient(90deg,transparent 75%,rgba(140,50,15,0.30) 88%,transparent 101%),linear-gradient(90deg,transparent 92%,rgba(235,140,70,0.19) 100%,transparent 108%)"></div>
<div class="sq l" style="left:159px;top:275px;background-image:linear-gradient(90deg,transparent 25%,rgba(200,160,110,0.15) 36%,transparent 47%),linear-gradient(90deg,transparent 35%,rgba(200,160,110,0.18) 45%,transparent 55%),linear-gradient(90deg,transparent 14%,rgba(200,160,110,0.10) 26%,transparent 38%)"></div>
<div class="sq d" style="left:261px;top:275px;background-image:linear-gradient(90deg,transparent 38%,rgba(140,50,15,0.31) 52%,transparent 66%),linear-gradient(90deg,transparent 15%,rgba(235,140,70,0.24) 29%,transparent 43%),linear-gradient(90deg,transparent 59%,rgba(140,50,15,0.18) 66%,transparent 73%),linear-gradient(90deg,transparent 25%,rgba(235,140,70,0.18) 38%,transparent 52%)"></div>
<div class="sq l" style="left:363px;top:275px;background-image:linear-gradient(90deg,transparent 6%,rgba(200,160,110,0.14) 18%,transparent 31%),linear-gradient(90deg,transparent 9%,rgba(200,160,110,0.16) 20%,transparent 31%),linear-gradient(90deg,transparent 37%,rgba(200,160,110,0.13) 48%,transparent 59%)"></div>
<div class="sq d" style="left:465px;top:275px;background-image:linear-gradient(90deg,transparent 54%,rgba(140,50,15,0.25) 68%,transparent 82%),linear-gradient(90deg,transparent 41%,rgba(235,140,70,0.28) 51%,transparent 61%),linear-gradient(90deg,transparent 21%,rgba(140,50,15,0.22) 29%,transparent 36%),linear-gradient(90deg,transparent 17%,rgba(235,140,70,0.18) 26%,transparent 35%)"></div>
<div class="sq l" style="left:567px;top:275px;background-image:linear-gradient(90deg,transparent 78%,rgba(200,160,110,0.19) 91%,transparent 103%),linear-gradient(90deg,transparent 82%,rgba(200,160,110,0.18) 90%,transparent 99%),linear-gradient(90deg,transparent 76%,rgba(200,160,110,0.17) 90%,transparent 105%)"></div>
<div class="sq d" style="left:669px;top:275px;background-image:linear-gradient(90deg,transparent 4%,rgba(140,50,15,0.27) 16%,transparent 29%),linear-gradient(90deg,transparent 40%,rgba(235,140,70,0.25) 48%,transparent 56%),linear-gradient(90deg,transparent 70%,rgba(140,50,15,0.25) 81%,transparent 92%),linear-gradient(90deg,transparent 18%,rgba(235,140,70,0.20) 24%,transparent 30%)"></div>
<div class="sq l" style="left:771px;top:275px;background-image:linear-gradient(90deg,transparent 88%,rgba(200,160,110,0.10) 96%,transparent 103%),linear-gradient(90deg,transparent 92%,rgba(200,160,110,0.11) 100%,transparent 108%),linear-gradient(90deg,transparent 56%,rgba(200,160,110,0.21) 65%,transparent 75%)"></div>
<div class="sq l" style="left:57px;top:377px;background-image:linear-gradient(90deg,transparent 77%,rgba(200,160,110,0.21) 92%,transparent 108%),linear-gradient(90deg,transparent -4%,rgba(200,160,110,0.15) 8%,transparent 20%),linear-gradient(90deg,transparent 46%,rgba(200,160,110,0.12) 53%,transparent 60%)"></div>
<div class="sq d" style="left:159px;top:377px;background-image:linear-gradient(90deg,transparent 57%,rgba(140,50,15,0.21) 71%,transparent 86%),linear-gradient(90deg,transparent 92%,rgba(235,140,70,0.24) 100%,transparent 108%),linear-gradient(90deg,transparent -4%,rgba(140,50,15,0.20) 9%,transparent 23%),linear-gradient(90deg,transparent 57%,rgba(235,140,70,0.25) 71%,transparent 84%)"></div>
<div class="sq l" style="left:261px;top:377px;background-image:linear-gradient(90deg,transparent 22%,rgba(200,160,110,0.20) 38%,transparent 53%),linear-gradient(90deg,transparent 7%,rgba(200,160,110,0.18) 21%,transparent 36%),linear-gradient(90deg,transparent -11%,rgba(200,160,110,0.13) 4%,transparent 20%)"></div>
<div class="sq d" style="left:363px;top:377px;background-image:linear-gradient(90deg,transparent 67%,rgba(140,50,15,0.21) 75%,transparent 83%),linear-gradient(90deg,transparent 54%,rgba(235,140,70,0.25) 60%,transparent 67%),linear-gradient(90deg,transparent 70%,rgba(140,50,15,0.28) 76%,transparent 83%),linear-gradient(90deg,transparent 38%,rgba(235,140,70,0.27) 50%,transparent 63%)"></div>
<div class="sq l" style="left:465px;top:377px;background-image:linear-gradient(90deg,transparent 52%,rgba(200,160,110,0.21) 65%,transparent 78%),linear-gradient(90deg,transparent 13%,rgba(200,160,110,0.20) 20%,transparent 26%),linear-gradient(90deg,transparent 24%,rgba(200,160,110,0.20) 33%,transparent 43%)"></div>
<div class="sq d" style="left:567px;top:377px;background-image:linear-gradient(90deg,transparent 4%,rgba(140,50,15,0.26) 11%,transparent 19%),linear-gradient(90deg,transparent 10%,rgba(235,140,70,0.21) 18%,transparent 25%),linear-gradient(90deg,transparent 34%,rgba(140,50,15,0.23) 42%,transparent 50%),linear-gradient(90deg,transparent 77%,rgba(235,140,70,0.17) 84%,transparent 92%)"></div>
<div class="sq l" style="left:669px;top:377px;background-image:linear-gradient(90deg,transparent 45%,rgba(200,160,110,0.20) 55%,transparent 64%),linear-gradient(90deg,transparent 18%,rgba(200,160,110,0.14) 29%,transparent 40%),linear-gradient(90deg,transparent 26%,rgba(200,160,110,0.11) 42%,transparent 57%)"></div>
<div class="sq d" style="left:771px;top:377px;background-image:linear-gradient(90deg,transparent 45%,rgba(140,50,15,0.18) 54%,transparent 63%),linear-gradient(90deg,transparent 57%,rgba(235,140,70,0.18) 65%,transparent 73%),linear-gradient(90deg,transparent 27%,rgba(140,50,15,0.32) 40%,transparent 52%),linear-gradient(90deg,transparent 30%,rgba(235,140,70,0.28) 46%,transparent 62%)"></div>
<div class="sq d" style="left:57px;top:479px;background-image:linear-gradient(90deg,transparent -6%,rgba(140,50,15,0.23) 1%,transparent 8%),linear-gradient(90deg,transparent 61%,rgba(235,140,70,0.16) 68%,transparent 76%),linear-gradient(90deg,transparent 10%,rgba(140,50,15,0.20) 23%,transparent 37%),linear-gradient(90deg,transparent 61%,rgba(235,140,70,0.17) 74%,transparent 87%)"></div>
<div class="sq l" style="left:159px;top:479px;background-image:linear-gradient(90deg,transparent -0%,rgba(200,160,110,0.14) 8%,transparent 16%),linear-gradient(90deg,transparent 79%,rgba(200,160,110,0.19) 90%,transparent 101%),linear-gradient(90deg,transparent -1%,rgba(200,160,110,0.20) 10%,transparent 21%)"></div>
<div class="sq d" style="left:261px;top:479px;background-image:linear-gradient(90deg,transparent 45%,rgba(140,50,15,0.29) 57%,transparent 69%),linear-gradient(90deg,transparent 15%,rgba(235,140,70,0.27) 28%,transparent 40%),linear-gradient(90deg,transparent 83%,rgba(140,50,15,0.27) 91%,transparent 99%),linear-gradient(90deg,transparent 51%,rgba(235,140,70,0.28) 62%,transparent 73%)"></div>
<div class="sq l" style="left:363px;top:479px;background-image:linear-gradient(90deg,transparent 41%,rgba(200,160,110,0.20) 53%,transparent 65%),linear-gradient(90deg,transparent 75%,rgba(200,160,110,0.14) 90%,transparent 105%),linear-gradient(90deg,transparent 85%,rgba(200,160,110,0.14) 95%,transparent 105%)"></div>
<div class="sq d" style="left:465px;top:479px;background-image:linear-gradient(90deg,transparent 41%,rgba(140,50,15,0.28) 55%,transparent 68%),linear-gradient(90deg,transparent 78%,rgba(235,140,70,0.28) 87%,transparent 95%),linear-gradient(90deg,transparent 43%,rgba(140,50,15,0.29) 57%,transparent 70%),linear-gradient(90deg,transparent 84%,rgba(235,140,70,0.20) 93%,transparent 102%)"></div>
<div class="sq l" style="left:567px;top:479px;background-image:linear-gradient(90deg,transparent 17%,rgba(200,160,110,0.22) 33%,transparent 49%),linear-gradient(90deg,transparent 78%,rgba(200,160,110,0.21) 92%,transparent 106%),linear-gradient(90deg,transparent -12%,rgba(200,160,110,0.13) 0%,transparent 12%)"></div>
<div class="sq d" style="left:669px;top:479px;background-image:linear-gradient(90deg,transparent 61%,rgba(140,50,15,0.27) 68%,transparent 75%),linear-gradient(90deg,transparent 70%,rgba(235,140,70,0.22) 84%,transparent 99%),linear-gradient(90deg,transparent 53%,rgba(140,50,15,0.25) 63%,transparent 73%),linear-gradient(90deg,transparent -2%,rgba(235,140,70,0.23) 11%,transparent 24%)"></div>
<div class="sq l" style="left:771px;top:479px;background-image:linear-gradient(90deg,transparent 54%,rgba(200,160,110,0.19) 64%,transparent 74%),linear-gradient(90deg,transparent -6%,rgba(200,160,110,0.14) 7%,transparent 20%),linear-gradient(90deg,transparent 53%,rgba(200,160,110,0.14) 61%,transparent 69%)"></div>
<div class="sq l" style="left:57px;top:581px;background-image:linear-gradient(90deg,transparent 11%,rgba(200,160,110,0.12) 21%,transparent 31%),linear-gradient(90deg,transparent 28%,rgba(200,160,110,0.18) 40%,transparent 51%),linear-gradient(90deg,transparent 16%,rgba(200,160,110,0.12) 25%,transparent 35%)"></div>
<div class="sq d" style="left:159px;top:581px;background-image:linear-gradient(90deg,transparent 31%,rgba(140,50,15,0.18) 46%,transparent 61%),linear-gradient(90deg,transparent 13%,rgba(235,140,70,0.24) 28%,transparent 44%),linear-gradient(90deg,transparent 3%,rgba(140,50,15,0.30) 13%,transparent 22%),linear-gradient(90deg,transparent 38%,rgba(235,140,70,0.27) 44%,transparent 50%)"></div>
<div class="sq l" style="left:261px;top:581px;background-image:linear-gradient(90deg,transparent 30%,rgba(200,160,110,0.12) 38%,transparent 46%),linear-gradient(90deg,transparent 80%,rgba(200,160,110,0.18) 91%,transparent 103%),linear-gradient(90deg,transparent 45%,rgba(200,160,110,0.19) 55%,transparent 65%)"></div>
<div class="sq d" style="left:363px;top:581px;background-image:linear-gradient(90deg,transparent 58%,rgba(140,50,15,0.22) 64%,transparent 70%),linear-gradient(90deg,transparent 9%,rgba(235,140,70,0.24) 22%,transparent 36%),linear-gradient(90deg,transparent 82%,rgba(140,50,15,0.24) 89%,transparent 96%),linear-gradient(90deg,transparent -5%,rgba(235,140,70,0.22) 3%,transparent 11%)"></div>
<div class="sq l" style="left:465px;top:581px;background-image:linear-gradient(90deg,transparent -9%,rgba(200,160,110,0.12) 4%,transparent 17%),linear-gradient(90deg,transparent 34%,rgba(200,160,110,0.20) 46%,transparent 59%),linear-gradient(90deg,transparent 34%,rgba(200,160,110,0.10) 45%,transparent 56%)"></div>
<div class="sq d" style="left:567px;top:581px;background-image:linear-gradient(90deg,transparent 29%,rgba(140,50,15,0.30) 41%,transparent 52%),linear-gradient(90deg,transparent 9%,rgba(235,140,70,0.15) 18%,transparent 26%),linear-gradient(90deg,transparent 6%,rgba(140,50,15,0.20) 12%,transparent 18%),linear-gradient(90deg,transparent 35%,rgba(235,140,70,0.24) 51%,transparent 67%)"></div>
<div class="sq l" style="left:669px;top:581px;background-image:linear-gradient(90deg,transparent 16%,rgba(200,160,110,0.11) 27%,transparent 38%),linear-gradient(90deg,transparent 27%,rgba(200,160,110,0.10) 34%,transparent 41%),linear-gradient(90deg,transparent 21%,rgba(200,160,110,0.14) 28%,transparent 36%)"></div>
<div class="sq d" style="left:771px;top:581px;background-image:linear-gradient(90deg,transparent 79%,rgba(140,50,15,0.26) 89%,transparent 99%),linear-gradient(90deg,transparent 78%,rgba(235,140,70,0.22) 86%,transparent 94%),linear-gradient(90deg,transparent 43%,rgba(140,50,15,0.18) 58%,transparent 74%),linear-gradient(90deg,transparent -2%,rgba(235,140,70,0.26) 7%,transparent 16%)"></div>
<div class="sq d" style="left:57px;top:683px;background-image:linear-gradient(90deg,transparent 25%,rgba(140,50,15,0.24) 35%,transparent 45%),linear-gradient(90deg,transparent 23%,rgba(235,140,70,0.20) 34%,transparent 45%),linear-gradient(90deg,transparent -6%,rgba(140,50,15,0.18) 4%,transparent 14%),linear-gradient(90deg,transparent 2%,rgba(235,140,70,0.28) 10%,transparent 19%)"></div>
<div class="sq l" style="left:159px;top:683px;background-image:linear-gradient(90deg,transparent 47%,rgba(200,160,110,0.19) 55%,transparent 62%),linear-gradient(90deg,transparent 15%,rgba(200,160,110,0.12) 30%,transparent 46%),linear-gradient(90deg,transparent 69%,rgba(200,160,110,0.22) 76%,transparent 84%)"></div>
<div class="sq d" style="left:261px;top:683px;background-image:linear-gradient(90deg,transparent -3%,rgba(140,50,15,0.20) 7%,transparent 17%),linear-gradient(90deg,transparent 64%,rgba(235,140,70,0.16) 75%,transparent 86%),linear-gradient(90deg,transparent -9%,rgba(140,50,15,0.20) 4%,transparent 18%),linear-gradient(90deg,transparent 61%,rgba(235,140,70,0.22) 73%,transparent 86%)"></div>
<div class="sq l" style="left:363px;top:683px;background-image:linear-gradient(90deg,transparent 41%,rgba(200,160,110,0.18) 50%,transparent 58%),linear-gradient(90deg,transparent 14%,rgba(200,160,110,0.22) 24%,transparent 35%),linear-gradient(90deg,transparent -1%,rgba(200,160,110,0.18) 9%,transparent 18%)"></div>
<div class="sq d" style="left:465px;top:683px;background-image:linear-gradient(90deg,transparent 13%,rgba(140,50,15,0.20) 24%,transparent 35%),linear-gradient(90deg,transparent 74%,rgba(235,140,70,0.22) 82%,transparent 90%),linear-gradient(90deg,transparent 83%,rgba(140,50,15,0.32) 93%,transparent 103%),linear-gradient(90deg,transparent 62%,rgba(235,140,70,0.23) 73%,transparent 85%)"></div>
<div class="sq l" style="left:567px;top:683px;background-image:linear-gradient(90deg,transparent 91%,rgba(200,160,110,0.19) 98%,transparent 104%),linear-gradient(90deg,transparent 33%,rgba(200,160,110,0.15) 48%,transparent 64%),linear-gradient(90deg,transparent 84%,rgba(200,160,110,0.22) 92%,transparent 100%)"></div>
<div class="sq d" style="left:669px;top:683px;background-image:linear-gradient(90deg,transparent 47%,rgba(140,50,15,0.24) 62%,transparent 77%),linear-gradient(90deg,transparent 56%,rgba(235,140,70,0.22) 71%,transparent 87%),linear-gradient(90deg,transparent 60%,rgba(140,50,15,0.30) 73%,transparent 87%),linear-gradient(90deg,transparent -4%,rgba(235,140,70,0.28) 4%,transparent 11%)"></div>
<div class="sq l" style="left:771px;top:683px;background-image:linear-gradient(90deg,transparent 84%,rgba(200,160,110,0.17) 91%,transparent 99%),linear-gradient(90deg,transparent 33%,rgba(200,160,110,0.15) 48%,transparent 64%),linear-gradient(90deg,transparent 33%,rgba(200,160,110,0.15) 45%,transparent 56%)"></div>
<div class="sq l" style="left:57px;top:785px;background-image:linear-gradient(90deg,transparent -6%,rgba(200,160,110,0.12) 9%,transparent 25%),linear-gradient(90deg,transparent 60%,rgba(200,160,110,0.19) 74%,transparent 88%),linear-gradient(90deg,transparent 21%,rgba(200,160,110,0.19) 30%,transparent 40%)"></div>
<div class="sq d" style="left:159px;top:785px;background-image:linear-gradient(90deg,transparent 85%,rgba(140,50,15,0.25) 97%,transparent 108%),linear-gradient(90deg,transparent 39%,rgba(235,140,70,0.28) 52%,transparent 66%),linear-gradient(90deg,transparent 34%,rgba(140,50,15,0.23) 42%,transparent 50%),linear-gradient(90deg,transparent -6%,rgba(235,140,70,0.28) 7%,transparent 19%)"></div>
<div class="sq l" style="left:261px;top:785px;background-image:linear-gradient(90deg,transparent -8%,rgba(200,160,110,0.10) 4%,transparent 16%),linear-gradient(90deg,transparent 36%,rgba(200,160,110,0.13) 51%,transparent 67%),linear-gradient(90deg,transparent 85%,rgba(200,160,110,0.21) 97%,transparent 110%)"></div>
<div class="sq d" style="left:363px;top:785px;background-image:linear-gradient(90deg,transparent 50%,rgba(140,50,15,0.27) 58%,transparent 66%),linear-gradient(90deg,transparent 88%,rgba(235,140,70,0.21) 95%,transparent 101%),linear-gradient(90deg,transparent 26%,rgba(140,50,15,0.30) 35%,transparent 44%),linear-gradient(90deg,transparent 83%,rgba(235,140,70,0.20) 97%,transparent 111%)"></div>
<div class="sq l" style="left:465px;top:785px;background-image:linear-gradient(90deg,transparent 7%,rgba(200,160,110,0.21) 22%,transparent 38%),linear-gradient(90deg,transparent -12%,rgba(200,160,110,0.19) 2%,transparent 17%),linear-gradient(90deg,transparent 62%,rgba(200,160,110,0.20) 68%,transparent 74%)"></div>
<div class="sq d" style="left:567px;top:785px;background-image:linear-gradient(90deg,transparent 19%,rgba(140,50,15,0.22) 31%,transparent 43%),linear-gradient(90deg,transparent 70%,rgba(235,140,70,0.19) 81%,transparent 91%),linear-gradient(90deg,transparent 76%,rgba(140,50,15,0.30) 90%,transparent 104%),linear-gradient(90deg,transparent 59%,rgba(235,140,70,0.20) 67%,transparent 74%)"></div>
<div class="sq l" style="left:669px;top:785px;background-image:linear-gradient(90deg,transparent 38%,rgba(200,160,110,0.20) 49%,transparent 61%),linear-gradient(90deg,transparent 23%,rgba(200,160,110,0.18) 32%,transparent 41%),linear-gradient(90deg,transparent 39%,rgba(200,160,110,0.15) 49%,transparent 58%)"></div>
<div class="sq d" style="left:771px;top:785px;background-image:linear-gradient(90deg,transparent 85%,rgba(140,50,15,0.32) 93%,transparent 101%),linear-gradient(90deg,transparent 13%,rgba(235,140,70,0.27) 24%,transparent 34%),linear-gradient(90deg,transparent 24%,rgba(140,50,15,0.20) 36%,transparent 47%),linear-gradient(90deg,transparent 80%,rgba(235,140,70,0.17) 96%,transparent 112%)"></div>
<div class="sq d" style="left:57px;top:887px;background-image:linear-gradient(90deg,transparent 36%,rgba(140,50,15,0.31) 45%,transparent 53%),linear-gradient(90deg,transparent 42%,rgba(235,140,70,0.25) 48%,transparent 55%),linear-gradient(90deg,transparent -0%,rgba(140,50,15,0.19) 8%,transparent 16%),linear-gradient(90deg,transparent 48%,rgba(235,140,70,0.23) 63%,transparent 77%)"></div>
<div class="sq l" style="left:159px;top:887px;background-image:linear-gradient(90deg,transparent 35%,rgba(200,160,110,0.15) 48%,transparent 60%),linear-gradient(90deg,transparent 86%,rgba(200,160,110,0.22) 92%,transparent 98%),linear-gradient(90deg,transparent 56%,rgba(200,160,110,0.20) 70%,transparent 84%)"></div>
<div class="sq d" style="left:261px;top:887px;background-image:linear-gradient(90deg,transparent 33%,rgba(140,50,15,0.30) 41%,transparent 50%),linear-gradient(90deg,transparent 33%,rgba(235,140,70,0.22) 44%,transparent 56%),linear-gradient(90deg,transparent 21%,rgba(140,50,15,0.31) 34%,transparent 46%),linear-gradient(90deg,transparent -4%,rgba(235,140,70,0.18) 7%,transparent 19%)"></div>
<div class="sq l" style="left:363px;top:887px;background-image:linear-gradient(90deg,transparent -3%,rgba(200,160,110,0.13) 7%,transparent 17%),linear-gradient(90deg,transparent 36%,rgba(200,160,110,0.20) 45%,transparent 53%),linear-gradient(90deg,transparent 43%,rgba(200,160,110,0.21) 56%,transparent 69%)"></div>
<div class="sq d" style="left:465px;top:887px;background-image:linear-gradient(90deg,transparent -6%,rgba(140,50,15,0.32) 7%,transparent 21%),linear-gradient(90deg,transparent 26%,rgba(235,140,70,0.21) 42%,transparent 57%),linear-gradient(90deg,transparent 47%,rgba(140,50,15,0.21) 62%,transparent 77%),linear-gradient(90deg,transparent -4%,rgba(235,140,70,0.15) 4%,transparent 12%)"></div>
<div class="sq l" style="left:567px;top:887px;background-image:linear-gradient(90deg,transparent 59%,rgba(200,160,110,0.19) 74%,transparent 90%),linear-gradient(90deg,transparent 84%,rgba(200,160,110,0.17) 91%,transparent 98%),linear-gradient(90deg,transparent 35%,rgba(200,160,110,0.20) 43%,transparent 52%)"></div>
<div class="sq d" style="left:669px;top:887px;background-image:linear-gradient(90deg,transparent 61%,rgba(140,50,15,0.20) 68%,transparent 75%),linear-gradient(90deg,transparent 51%,rgba(235,140,70,0.27) 61%,transparent 70%),linear-gradient(90deg,transparent 64%,rgba(140,50,15,0.24) 79%,transparent 93%),linear-gradient(90deg,transparent 71%,rgba(235,140,70,0.26) 83%,transparent 95%)"></div>
<div class="sq l" style="left:771px;top:887px;background-image:linear-gradient(90deg,transparent 82%,rgba(200,160,110,0.16) 91%,transparent 100%),linear-gradient(90deg,transparent -2%,rgba(200,160,110,0.12) 14%,transparent 30%),linear-gradient(90deg,transparent 55%,rgba(200,160,110,0.19) 67%,transparent 79%)"></div>
<svg class="a" style="left:57px;top:173px;mix-blend-mode:multiply" width="816" height="816"><defs><pattern id="dpat" width="204" height="204" patternUnits="userSpaceOnUse"><rect x="102" y="0" width="102" height="102" fill="#fff"/><rect x="0" y="102" width="102" height="102" fill="#fff"/></pattern><pattern id="lpat" width="204" height="204" patternUnits="userSpaceOnUse"><rect x="0" y="0" width="102" height="102" fill="#fff"/><rect x="102" y="102" width="102" height="102" fill="#fff"/></pattern><mask id="dmask"><rect width="816" height="816" fill="url(#dpat)"/></mask><mask id="lmask"><rect width="816" height="816" fill="url(#lpat)"/></mask><filter id="grain" x="0" y="0" width="100%" height="100%"><feTurbulence type="fractalNoise" baseFrequency="0.06 0.006" numOctaves="3" seed="7"/><feColorMatrix type="matrix" values="0 0 0 0 0.5  0 0 0 0 0.28  0 0 0 0 0.15  -1.6 0 0 0 1.05"/></filter><filter id="blot" x="0" y="0" width="100%" height="100%"><feTurbulence type="fractalNoise" baseFrequency="0.035 0.012" numOctaves="3" seed="3"/><feColorMatrix type="matrix" values="0 0 0 0 0.75  0 0 0 0 0.6  0 0 0 0 0.45  -1.4 0 0 0 0.85"/></filter></defs><rect width="816" height="816" filter="url(#grain)" mask="url(#dmask)" opacity="0.5"/><rect width="816" height="816" filter="url(#blot)" mask="url(#lmask)" opacity="0.3"/><filter id="fine" x="0" y="0" width="100%" height="100%"><feTurbulence type="fractalNoise" baseFrequency="0.6 0.05" numOctaves="2" seed="9"/><feColorMatrix type="matrix" values="0 0 0 0 0.6  0 0 0 0 0.4  0 0 0 0 0.25  -1.3 0 0 0 0.75"/></filter><rect width="816" height="816" filter="url(#fine)" opacity="0.25"/></svg>
<div class="hl" style="left:58px;top:582px;border-color:#c6de4e"></div>
<div class="hl" style="left:160px;top:684px;border-color:#46c83c"></div>
<div class="hl" style="left:262px;top:786px;border-color:#c6de4e"></div>
<div class="hl" style="left:160px;top:888px;border-color:#c6de4e"></div>
<div class="hl" style="left:262px;top:888px;border-color:#c4cc2a"></div>
<div class="hl" style="left:670px;top:582px;border-color:#e8461e"></div>
<div class="hl" style="left:568px;top:684px;border-color:#e8461e"></div>
<div class="hl" style="left:466px;top:786px;border-color:#e8461e"></div>
<svg class="pc" style="left:57px;top:173px" width="102" height="102" viewBox="0 0 102 102"><use href="#br"/></svg>
<svg class="pc" style="left:567px;top:173px" width="102" height="102" viewBox="0 0 102 102"><use href="#br"/></svg>
<svg class="pc" style="left:669px;top:173px" width="102" height="102" viewBox="0 0 102 102"><use href="#bk"/></svg>
<svg class="pc" style="left:57px;top:275px" width="102" height="102" viewBox="0 0 102 102"><use href="#bp"/></svg>
<svg class="pc" style="left:159px;top:275px" width="102" height="102" viewBox="0 0 102 102"><use href="#bp"/></svg>
<svg class="pc" style="left:261px;top:275px" width="102" height="102" viewBox="0 0 102 102"><use href="#bp"/></svg>
<svg class="pc" style="left:567px;top:275px" width="102" height="102" viewBox="0 0 102 102"><use href="#bp"/></svg>
<svg class="pc" style="left:669px;top:275px" width="102" height="102" viewBox="0 0 102 102"><use href="#bp"/></svg>
<svg class="pc" style="left:771px;top:275px" width="102" height="102" viewBox="0 0 102 102"><use href="#bp"/></svg>
<svg class="pc" style="left:261px;top:377px" width="102" height="102" viewBox="0 0 102 102"><use href="#bn"/></svg>
<svg class="pc" style="left:567px;top:377px" width="102" height="102" viewBox="0 0 102 102"><use href="#bn"/></svg>
<svg class="pc" style="left:669px;top:479px" width="102" height="102" viewBox="0 0 102 102"><use href="#bq"/></svg>
<svg class="pc" style="left:261px;top:581px" width="102" height="102" viewBox="0 0 102 102"><use href="#wb"/></svg>
<svg class="pc" style="left:363px;top:581px" width="102" height="102" viewBox="0 0 102 102"><use href="#wp"/></svg>
<svg class="pc" style="left:465px;top:581px" width="102" height="102" viewBox="0 0 102 102"><use href="#bp"/></svg>
<svg class="pc" style="left:669px;top:581px" width="102" height="102" viewBox="0 0 102 102"><use href="#bb"/></svg>
<svg class="pc" style="left:57px;top:683px" width="102" height="102" viewBox="0 0 102 102"><use href="#wp"/></svg>
<svg class="pc" style="left:261px;top:683px" width="102" height="102" viewBox="0 0 102 102"><use href="#wp"/></svg>
<svg class="pc" style="left:465px;top:683px" width="102" height="102" viewBox="0 0 102 102"><use href="#wp"/></svg>
<svg class="pc" style="left:669px;top:683px" width="102" height="102" viewBox="0 0 102 102"><use href="#wp"/></svg>
<svg class="pc" style="left:159px;top:785px" width="102" height="102" viewBox="0 0 102 102"><use href="#wb"/></svg>
<svg class="pc" style="left:363px;top:785px" width="102" height="102" viewBox="0 0 102 102"><use href="#wn"/></svg>
<svg class="pc" style="left:567px;top:785px" width="102" height="102" viewBox="0 0 102 102"><use href="#wp"/></svg>
<svg class="pc" style="left:771px;top:785px" width="102" height="102" viewBox="0 0 102 102"><use href="#wp"/></svg>
<svg class="pc" style="left:57px;top:887px" width="102" height="102" viewBox="0 0 102 102"><use href="#wr"/></svg>
<svg class="pc" style="left:363px;top:887px" width="102" height="102" viewBox="0 0 102 102"><use href="#wq"/></svg>
<svg class="pc" style="left:465px;top:887px" width="102" height="102" viewBox="0 0 102 102"><use href="#wk"/></svg>
<svg class="pc" style="left:771px;top:887px" width="102" height="102" viewBox="0 0 102 102"><use href="#wr"/></svg>
<div class="rk" style="top:217px">8</div>
<div class="fl" style="left:98px">a</div>
<div class="rk" style="top:319px">7</div>
<div class="fl" style="left:200px">b</div>
<div class="rk" style="top:421px">6</div>
<div class="fl" style="left:302px">c</div>
<div class="rk" style="top:523px">5</div>
<div class="fl" style="left:404px">d</div>
<div class="rk" style="top:625px">4</div>
<div class="fl" style="left:506px">e</div>
<div class="rk" style="top:727px">3</div>
<div class="fl" style="left:608px">f</div>
<div class="rk" style="top:829px">2</div>
<div class="fl" style="left:710px">g</div>
<div class="rk" style="top:931px">1</div>
<div class="fl" style="left:812px">h</div>
<div class="a" style="left:877px;top:430px;width:11px;height:303px;border-radius:6px;background:linear-gradient(90deg,#bdbdbd,#f4f4f4 50%,#c8c8c8)"></div>
<div class="a" style="left:875px;top:580px;width:15px;height:2px;background:#2ed02e"></div>
<div class="a" style="left:877px;top:992px;width:10px;height:10px;border-radius:50%;background:radial-gradient(#f4f6ff,#c4c8e4)"></div>

<!-- RIGHT PANELS -->
<div class="a" style="left:931px;top:147px;width:5px;height:868px;background:#fbfbfb"></div>
<div class="a" style="left:936px;top:147px;width:1px;height:868px;background:#7a7a7a"></div>
<!-- clocks -->
<div class="ph" style="top:146px;height:20px;padding-top:4px">Clocks: 5s/Move<div class="dd"></div><svg class="cx" width="9" height="9" viewBox="0 0 9 9"><path d="M0.8,0.8 L8.2,8.2 M8.2,0.8 L0.8,8.2" stroke="#111" stroke-width="1.7"/></svg></div>
<div class="a" style="left:937px;top:166px;width:983px;height:119px;background:linear-gradient(#e6e6e6,#fff 28px)"></div>
<div class="a" style="left:1144px;top:214px;width:23px;height:23px;border:2px solid #c0c0c0;background:#fff"></div>
<div class="a" style="left:1180px;top:189px;width:242px;height:72px;background:#000;border:2px solid #cfcfcf;color:#fff;font-size:52px;text-align:center;line-height:68px">0:00:00</div>
<div class="a" style="left:1434px;top:189px;width:242px;height:72px;background:#000;border:2px solid #cfcfcf;color:#e4e4e4;font-size:52px;text-align:center;line-height:68px">0:00:00</div>
<div class="a" style="left:1688px;top:214px;width:23px;height:23px;border:2px solid #c0c0c0;background:#000"></div>
<div class="a" style="left:937px;top:285px;width:983px;height:4px;background:#ececec"></div>
<div class="a" style="left:937px;top:289px;width:983px;height:1px;background:#6e6e6e"></div>
<!-- notation -->
<div class="ph" style="top:290px;height:18px">Notation + Openings Book<div class="dd"></div><svg class="cx" width="9" height="9" viewBox="0 0 9 9"><path d="M0.8,0.8 L8.2,8.2 M8.2,0.8 L0.8,8.2" stroke="#111" stroke-width="1.7"/></svg></div>
<div class="a" style="left:937px;top:308px;width:983px;height:27px;background:#f0f0f0;border-bottom:1px solid #dcdcdc"></div>
<div class="ntab" style="left:999px;width:53px">Training</div>
<div class="ntab" style="left:1052px;width:73px">Score sheet</div>
<div class="ntab" style="left:1125px;width:60px">LiveBook</div>
<div class="ntab" style="left:1185px;width:91px">Openings Book</div>
<div class="a" style="left:937px;top:310px;width:62px;height:26px;background:#fdfdfd;border:1px solid #e0e0e0;border-bottom:none;font-size:13px;text-align:center;padding-top:3px">Notation</div>
<div class="a" style="left:937px;top:335px;width:983px;height:46px;background:linear-gradient(#fff,#f0f0f0)"></div>
<svg class="a" style="left:1059px;top:339px" width="30" height="42" viewBox="0 0 30 42"><defs><linearGradient id="phb" x1="0" y1="0" x2="1" y2="0.3"><stop offset="0" stop-color="#7a7a7a"/><stop offset="1" stop-color="#c4c4c4"/></linearGradient><radialGradient id="fc" cx="0.5" cy="0.4" r="0.6"><stop offset="0" stop-color="#dcdcdc"/><stop offset="1" stop-color="#8a8a8a"/></radialGradient></defs><rect width="30" height="42" fill="url(#phb)"/><rect x="0" y="0" width="30" height="5" fill="#e0e0e0"/><path d="M2,24 Q0,6 14,5 Q28,5 28,17 L26,26 Q25,13 18,12 Q10,12 8,26 z" fill="#1a1a1a"/><ellipse cx="17" cy="20" rx="6.5" ry="8.5" fill="url(#fc)"/><path d="M9,15 Q13,8 21,10.5 Q15,12.5 11,21 z" fill="#202020"/><path d="M0,42 L0,31 Q8,27 16,29 Q25,27 30,30 L30,42 z" fill="#161616"/><path d="M4,34 L6,36 L5,42 L3,42 z M23,35 L25,33 L27,42 L24,42 z" fill="#b8b8b8" opacity="0.8"/></svg>
<div class="nt" style="left:1270px;top:338px;font-size:15px"><b style="font-weight:normal;-webkit-text-stroke:0.3px #000">Dubov,Daniil</b> 2677&nbsp; - <b style="font-weight:normal;-webkit-text-stroke:0.3px #000">Alekseenko,Kirill</b> 2563 &nbsp; 0-1</div>
<div class="nt" style="left:1097px;top:360px;font-size:15px;letter-spacing:-0.3px">D20 RUS-chT rapid Sochi [Moscow Fighters for the Idea-St Petersburg SDYUSSHOR] (4.1) 03.10.2017</div>
<div class="a" style="left:937px;top:381px;width:983px;height:1px;background:#1c1c9c"></div>
<div class="a" style="left:937px;top:382px;width:967px;height:308px;background:#fff"></div>
<div class="a" style="left:1904px;top:382px;width:16px;height:308px;background:#c9c9c9"></div>
<div class="a" style="left:1904px;top:382px;width:15px;height:16px;background:#fff;border:1px solid #d8d8d8"></div>
<div class="a" style="left:1907px;top:388px;width:0;height:0;border-left:4.5px solid transparent;border-right:4.5px solid transparent;border-bottom:5px solid #707070"></div>
<div class="a" style="left:1904px;top:399px;width:15px;height:17px;background:#fff;border:1px solid #d8d8d8"></div>
<div class="a" style="left:1904px;top:673px;width:15px;height:17px;background:#fff;border:1px solid #d8d8d8"></div>
<div class="a" style="left:1907px;top:680px;width:0;height:0;border-left:4.5px solid transparent;border-right:4.5px solid transparent;border-top:5px solid #707070"></div>
<div class="nt" style="left:941px;top:384px">1.d4&nbsp; d5&nbsp; 2.c4&nbsp; dxc4&nbsp; 3.e3&nbsp; e5&nbsp; 4.Bxc4&nbsp; Nc6&nbsp; 5.Nf3&nbsp; e4&nbsp; 6.Nfd2&nbsp; Qg5&nbsp; 7.g3&nbsp; Nf6&nbsp; 8.Nc3&nbsp; Bb4&nbsp; 9.a3&nbsp; Bxc3&nbsp; 10.bxc3&nbsp; 0-0</div>
<div class="nt" style="left:957px;top:406px">[ <span style="text-decoration:underline">10...h5</span> ]</div>
<div class="nt" style="left:941px;top:428px;word-spacing:-0.62px">11.Bb2 <span style="background:#000;color:#fff;padding:2px 2px 3px 3px;margin-left:-2px">Bg4</span> 12.Be2&nbsp; Qf5&nbsp; 13.Bxg4&nbsp; Nxg4&nbsp; 14.Qe2&nbsp; Rfe8&nbsp; 15.c4&nbsp; Rad8&nbsp; 16.h3&nbsp; Nf6&nbsp; 17.Bc3&nbsp; b6&nbsp; 18.Rb1&nbsp; Nb8&nbsp; 19.a4&nbsp; c5&nbsp; 20.d5&nbsp; Nbd7&nbsp; 21.a5&nbsp; Rb8</div>
<div class="nt" style="left:941px;top:450px;word-spacing:-0.86px">22.Kf1&nbsp; bxa5&nbsp; 23.Ra1&nbsp; Ne5&nbsp; 24.Kg2&nbsp; Nfd7&nbsp; 25.Rxa5&nbsp; Rb7&nbsp; 26.Rha1&nbsp; Ra8&nbsp; 27.Ra6&nbsp; h5&nbsp; 28.R1a5&nbsp; f6&nbsp; 29.Bxe5&nbsp; Nxe5&nbsp; 30.Rb5&nbsp; Rab8&nbsp; 31.Rxa7&nbsp; Rxa7</div>
<div class="nt" style="left:941px;top:472px;word-spacing:-0.3px">32.Rxb8+&nbsp; Kh7&nbsp; 33.Rb2&nbsp; Nd3&nbsp; 34.g4&nbsp; Qe5&nbsp; 35.Rb1&nbsp; Ra2&nbsp; 36.gxh5&nbsp; Qg5+&nbsp; 37.Kf1&nbsp; Qf5&nbsp; 38.Kg2&nbsp; Ne5&nbsp; 39.Qd1&nbsp; Nxc4</div>
<div class="nt" style="left:941px;top:494px">0-1</div>
<div class="a" style="left:937px;top:690px;width:983px;height:2px;background:#000"></div>
<!-- timeline -->
<div class="a" style="left:937px;top:692px;width:983px;height:54px;background:#fff"></div>
<div class="a" style="left:947px;top:702px;width:1px;height:34px;background:#000"></div>
<div class="a" style="left:947px;top:719px;width:958px;height:1px;background:#000"></div>
<div class="a" style="left:948px;top:717px;width:12px;height:2px;background:#1a7a1a"></div>
<div class="a" style="left:1169px;top:719px;width:20px;height:2px;background:#e00"></div>
<div class="a" style="left:1178px;top:695px;width:2px;height:4px;background:#00f"></div>
<div class="a" style="left:1909px;top:702px;width:5px;height:35px;border:1px solid #000;background:linear-gradient(#fffbe0 70%,#6ae0f0 70%)"></div>
<div class="tk" style="left:977.1px"></div><div class="tl" style="left:967.6px">2</div>
<div class="tk" style="left:1019.2px"></div><div class="tl" style="left:1009.7px">4</div>
<div class="tk" style="left:1061.3px"></div><div class="tl" style="left:1051.8px">6</div>
<div class="tk" style="left:1103.4px"></div><div class="tl" style="left:1093.9px">8</div>
<div class="tk" style="left:1145.5px"></div><div class="tl" style="left:1136.0px">10</div>
<div class="tk" style="left:1187.6px"></div><div class="tl" style="left:1178.1px">12</div>
<div class="tk" style="left:1229.7px"></div><div class="tl" style="left:1220.2px">14</div>
<div class="tk" style="left:1271.8px"></div><div class="tl" style="left:1262.3px">16</div>
<div class="tk" style="left:1313.9px"></div><div class="tl" style="left:1304.4px">18</div>
<div class="tk" style="left:1356.0px"></div><div class="tl" style="left:1346.5px">20</div>
<div class="tk" style="left:1398.1px"></div><div class="tl" style="left:1388.6px">22</div>
<div class="tk" style="left:1440.2px"></div><div class="tl" style="left:1430.7px">24</div>
<div class="tk" style="left:1482.3px"></div><div class="tl" style="left:1472.8px">26</div>
<div class="tk" style="left:1524.4px"></div><div class="tl" style="left:1514.9px">28</div>
<div class="tk" style="left:1566.5px"></div><div class="tl" style="left:1557.0px">30</div>
<div class="tk" style="left:1608.6px"></div><div class="tl" style="left:1599.1px">32</div>
<div class="tk" style="left:1650.7px"></div><div class="tl" style="left:1641.2px">34</div>
<div class="tk" style="left:1692.8px"></div><div class="tl" style="left:1683.3px">36</div>
<div class="tk" style="left:1734.9px"></div><div class="tl" style="left:1725.4px">38</div>
<div class="tk" style="left:1777.0px"></div><div class="tl" style="left:1767.5px">40</div>
<div class="tk" style="left:1819.1px"></div><div class="tl" style="left:1809.6px">42</div>
<div class="a" style="left:948px;top:745px;width:972px;height:1px;background:#bdbdbd"></div>
<div class="a" style="left:937px;top:746px;width:983px;height:24px;background:#fff"></div>
<svg class="a" style="left:952.0px;top:749px" width="12" height="18" viewBox="0 0 12 18"><path d="M6,1 L11,7 L7.5,7 L7.5,16 L4.5,16 L4.5,7 L1,7 z" fill="#0a7a10"/></svg>
<svg class="a" style="left:977.0px;top:749px" width="16" height="16" viewBox="0 0 16 16"><path d="M4,3 L12,13 M5,10 L9,6" stroke="#888" stroke-width="2"/><path d="M2,2 L14,14 M14,2 L2,14" stroke="#e01010" stroke-width="1.3"/></svg>
<svg class="a" style="left:1009.0px;top:749px" width="8" height="16" viewBox="0 0 8 16"><path d="M1,2 L5,2 L5,14 L1,14" fill="none" stroke="#111" stroke-width="2.2"/></svg>
<svg class="a" style="left:1031.0px;top:749px" width="16" height="16" viewBox="0 0 16 16"><path d="M9,2 a2,2 0 1 1 0.1,0 M6,14 L12,14 L11,10 L10,7 L8,7 L7,10 z" fill="#111"/><circle cx="9" cy="4" r="2.2" fill="#111"/><text x="1" y="7" font-size="5" fill="#d00">T</text></svg>
<svg class="a" style="left:1057.0px;top:749px" width="16" height="16" viewBox="0 0 16 16"><circle cx="7" cy="4" r="2.2" fill="#d01010"/><path d="M4,14 L10,14 L9,10 L8,7 L6,7 L5,10 z" fill="#d01010"/></svg>
<svg class="a" style="left:1085.5px;top:749px" width="16" height="16" viewBox="0 0 16 16"><rect x="0" y="0" width="16" height="16" fill="#a07050"/><rect x="2" y="2" width="5" height="5" fill="#d8c8b0"/><rect x="9" y="9" width="5" height="5" fill="#d8c8b0"/><rect x="9" y="2" width="5" height="5" fill="#402818"/><rect x="2" y="9" width="5" height="5" fill="#402818"/></svg>
<div class="a" style="left:1106.0px;top:747px;width:30px;text-align:center;font-size:17px;color:#1a1a1a;font-family:"Liberation Sans",sans-serif;">!!</div>
<div class="a" style="left:1132.5px;top:747px;width:30px;text-align:center;font-size:17px;color:#1a1a1a;font-family:"Liberation Sans",sans-serif;">!</div>
<div class="a" style="left:1160.0px;top:747px;width:30px;text-align:center;font-size:17px;color:#1a1a1a;font-family:"Liberation Sans",sans-serif;">!?</div>
<div class="a" style="left:1186.6px;top:747px;width:30px;text-align:center;font-size:17px;color:#1a1a1a;font-family:"Liberation Sans",sans-serif;">?!</div>
<div class="a" style="left:1213.7px;top:747px;width:30px;text-align:center;font-size:17px;color:#1a1a1a;font-family:"Liberation Sans",sans-serif;">?</div>
<div class="a" style="left:1240.5px;top:747px;width:30px;text-align:center;font-size:17px;color:#1a1a1a;font-family:"Liberation Sans",sans-serif;">??</div>
<svg class="a" style="left:1274.0px;top:749px" width="18" height="16" viewBox="0 0 18 16"><path d="M1,8 L8,8 M4.5,4.5 L4.5,11.5 M10,8 L17,8" stroke="#111" stroke-width="1.3"/></svg>
<svg class="a" style="left:1303.0px;top:749px" width="14" height="16" viewBox="0 0 14 16"><path d="M2,7 L12,7 M7,2 L7,12 M2,14 L12,14" stroke="#111" stroke-width="1.3"/></svg>
<svg class="a" style="left:1330.5px;top:749px" width="14" height="18" viewBox="0 0 14 18"><path d="M2,5 L12,5 M7,1 L7,9 M2,12 L12,12 M2,15 L12,15" stroke="#111" stroke-width="1.3"/></svg>
<svg class="a" style="left:1357.0px;top:749px" width="14" height="16" viewBox="0 0 14 16"><path d="M2,6 L12,6 M2,10 L12,10" stroke="#111" stroke-width="1.3"/></svg>
<svg class="a" style="left:1384.0px;top:749px" width="14" height="16" viewBox="0 0 14 16"><path d="M7,8 C4,4 1,5 1,8 C1,11 4,12 7,8 C10,4 13,5 13,8 C13,11 10,12 7,8 z" fill="none" stroke="#111" stroke-width="1.6"/></svg>
<svg class="a" style="left:1410.7px;top:749px" width="14" height="18" viewBox="0 0 14 18"><path d="M7,5 C5,2 2,2.5 2,5 C2,7.5 5,8 7,5 C9,2 12,2.5 12,5 C12,7.5 9,8 7,5 z" fill="none" stroke="#111" stroke-width="1.3"/><path d="M2,11 L12,11 M2,14 L12,14" stroke="#111" stroke-width="1.3"/></svg>
<svg class="a" style="left:1437.0px;top:749px" width="14" height="18" viewBox="0 0 14 18"><path d="M2,2 L12,2 M2,5 L12,5 M2,12 L12,12 M7,8 L7,16" stroke="#111" stroke-width="1.3"/></svg>
<svg class="a" style="left:1464.0px;top:749px" width="14" height="16" viewBox="0 0 14 16"><path d="M2,2 L12,2 M2,9 L12,9 M7,4 L7,14" stroke="#111" stroke-width="1.3"/></svg>
<svg class="a" style="left:1489.6px;top:749px" width="18" height="16" viewBox="0 0 18 16"><path d="M1,8 L7,8 M10,8 L17,8 M13.5,4.5 L13.5,11.5" stroke="#111" stroke-width="1.3"/></svg>
<svg class="a" style="left:1517.5px;top:749px" width="16" height="16" viewBox="0 0 16 16"><path d="M1,5 L15,5 M11,2 L15,5 L11,8 M15,11 L1,11 M5,8 L1,11 L5,14" fill="none" stroke="#111" stroke-width="1.5"/></svg>
<svg class="a" style="left:1543.8px;top:749px" width="18" height="14" viewBox="0 0 18 14"><path d="M1,10 L9,2 L17,5 L9,13 z" fill="#d85a6a"/><path d="M1,10 L5,6 L13,9 L9,13 z" fill="#7a9ad8"/></svg>
<svg class="a" style="left:1575.4px;top:749px" width="8" height="16" viewBox="0 0 8 16"><rect x="1" y="1" width="6" height="14" rx="3" fill="#aaa"/><path d="M2,4 L6,4 M2,6 L6,6 M2,8 L6,8" stroke="#555"/><circle cx="4" cy="12" r="1.3" fill="#555"/></svg>
<div class="a" style="left:937px;top:770px;width:983px;height:5px;background:#ececec"></div>
<div class="a" style="left:937px;top:775px;width:983px;height:1px;background:#6e6e6e"></div>
<!-- engine -->
<div class="ph" style="top:776px">Engine: Fritz 16<div class="dd"></div><svg class="cx" width="9" height="9" viewBox="0 0 9 9"><path d="M0.8,0.8 L8.2,8.2 M8.2,0.8 L0.8,8.2" stroke="#111" stroke-width="1.7"/></svg></div>
<div class="a" style="left:937px;top:795px;width:983px;height:217px;background:#f0f0f0"></div>
<div class="a" style="left:942px;top:801px;width:64px;height:23px;background:#fff;border-right:1px solid #a8a8a8;border-bottom:1px solid #a8a8a8;font-size:14px;padding:4px 0 0 6px">Stopped</div>
<div class="ebtn" style="left:1015px;width:30px"></div>
<svg class="a" style="left:1021px;top:803px" width="18" height="18" viewBox="0 0 18 18"><circle cx="9" cy="9" r="8" fill="#2a56d8" stroke="#3ab04a" stroke-width="0.8"/><path d="M7,5 L13,9 L7,13 z" fill="#fff"/></svg>
<div class="ebtn" style="left:1055px;width:30px"></div>
<svg class="a" style="left:1061px;top:804px" width="18" height="17" viewBox="0 0 18 17"><circle cx="7" cy="7" r="5.5" fill="#d0e8f8" stroke="#30a030" stroke-width="1.2"/><path d="M4,7 L10,7 M7,4 L7,10" stroke="#333"/><path d="M11,11 L16,16" stroke="#777" stroke-width="2"/></svg>
<div class="ebtn" style="left:1092px;width:30px"></div>
<svg class="a" style="left:1098px;top:804px" width="18" height="17" viewBox="0 0 18 17"><circle cx="7" cy="7" r="5.5" fill="#e0e840" stroke="#30a030" stroke-width="1.2"/><path d="M4,7 L10,7" stroke="#555" stroke-width="1.5"/><path d="M11,11 L16,16" stroke="#777" stroke-width="2"/></svg>
<div class="ebtn" style="left:1132px;width:58px;font-size:13px;padding:2px 0 0 7px;letter-spacing:-0.3px">4 CPUs</div>
<div class="ebtn" style="left:1197px;width:30px"></div>
<svg class="a" style="left:1202px;top:803px" width="20" height="18" viewBox="0 0 20 18"><rect x="1" y="2" width="15" height="13" fill="#fff" stroke="#4a8ad0" stroke-width="1.2"/><rect x="1" y="2" width="15" height="3" fill="#4a8ad0"/><path d="M8,15 L17,6" stroke="#f0a020" stroke-width="2.5"/></svg>
<div class="a" style="left:1251px;top:801px;width:21px;height:22px;background:#e8e8e8;border:1px solid #d8d8d8"></div>
<svg class="a" style="left:1254px;top:803px" width="14" height="18" viewBox="0 0 14 18"><path d="M3.5,8 L3.5,5 A3.5,3.5 0 0 1 10.5,5" fill="none" stroke="#111" stroke-width="1.8"/><rect x="1.5" y="8" width="11" height="9" fill="#111"/><rect x="6" y="11" width="2" height="3" fill="#fff"/></svg>
<div class="a" style="left:942px;top:829px;width:23px;height:23px;background:#f0f0f0;border-right:1px solid #a8a8a8;border-bottom:1px solid #a8a8a8"></div>
<div class="a" style="left:946px;top:833px;width:14px;height:14px;border-radius:50%;background:radial-gradient(circle at 40% 35%,#c8c8c8,#7a7a7a)"></div>
<div class="efld" style="left:973px;width:78px"></div>
<div class="efld" style="left:1059px;width:83px"></div>
<div class="efld" style="left:1150px;width:116px"></div>
<div class="efld" style="left:1274px;width:76px"></div>
<div class="efld" style="left:1357px;width:54px"></div>
<div class="a" style="left:1836px;top:802px;width:49px;height:49px;background:#e0e0e0;border:1px solid #b8b8b8"></div>
<svg class="a" style="left:1843px;top:813px" width="34" height="26" viewBox="0 0 34 26"><defs><linearGradient id="cl" x1="0" y1="0" x2="0" y2="1"><stop offset="0" stop-color="#a8cce8"/><stop offset="1" stop-color="#fff"/></linearGradient></defs><path d="M6,22 Q1,22 1,16 Q1,10 7,10 Q9,3 17,3 Q25,3 27,10 Q33,10 33,16 Q33,22 28,22 z" fill="url(#cl)" stroke="#c8a020" stroke-width="0.8"/></svg>
<div class="a" style="left:942px;top:861px;width:943px;height:86px;background:#f0f0f0;border-top:1px solid #fafafa;border-bottom:1px solid #7a7a7a;border-right:1px solid #fafafa"></div>
<div class="a" style="left:1890px;top:863px;width:24px;height:77px;background:#e0e0e0;border:1px solid #c0c0c0"></div>
<svg class="a" style="left:1892px;top:872px" width="20" height="56" viewBox="0 0 20 56"><path d="M2,0 L10,0 L19,28 L10,56 L2,56 L11,28 z" fill="#0a6ad8"/></svg>
<div class="a" style="left:942px;top:948px;width:943px;height:62px;background:#fff;border-top:3px solid #f0f0f0;border-left:3px solid #f0f0f0;border-bottom:1px solid #7a7a7a"></div>
<div class="a" style="left:1866px;top:953px;width:16px;height:15px;background:#fff;border:1px solid #d8d8d8"></div>
<div class="a" style="left:1869px;top:958px;width:0;height:0;border-left:4.5px solid transparent;border-right:4.5px solid transparent;border-bottom:5px solid #707070"></div>
<div class="a" style="left:1866px;top:969px;width:16px;height:18px;background:#fff;border:1px solid #d8d8d8"></div>
<div class="a" style="left:1866px;top:990px;width:16px;height:17px;background:#fff;border:1px solid #d8d8d8"></div>
<div class="a" style="left:1869px;top:996px;width:0;height:0;border-left:4.5px solid transparent;border-right:4.5px solid transparent;border-top:5px solid #707070"></div>
<div class="a" style="left:937px;top:1012px;width:983px;height:3px;background:#f4f4f4;border-top:1px solid #cfcfcf"></div>

<div class="a" style="left:1388px;top:285px;width:84px;height:3px;background:repeating-linear-gradient(90deg,#bdbdbd 0 3px,transparent 3px 5px)"></div>
<div class="a" style="left:1388px;top:771px;width:84px;height:3px;background:repeating-linear-gradient(90deg,#bdbdbd 0 3px,transparent 3px 5px)"></div>
<div class="a" style="left:932px;top:540px;width:2px;height:77px;background:repeating-linear-gradient(180deg,#d4d4d4 0 3px,transparent 3px 5px)"></div>
<div class="a" style="left:942px;top:750px;width:2px;height:18px;background:repeating-linear-gradient(180deg,#c8c8c8 0 2px,transparent 2px 4px)"></div>
<!-- STATUS BAR -->
<div class="a" style="left:0;top:1015px;width:1920px;height:25px;background:#f0f0f0"></div>
<div class="a" style="left:9px;top:1021px;font-size:11px;color:#333;letter-spacing:0.12px">D20: Queen's Gambit Accepted: 3 e3 and 3 e4</div>
<div class="a" style="left:1803px;top:1020px;width:114px;height:16px;border:1px solid #000;background:#fff;font-size:10px;text-align:center;line-height:14px;color:#222">5s/Move</div>
</body></html>
